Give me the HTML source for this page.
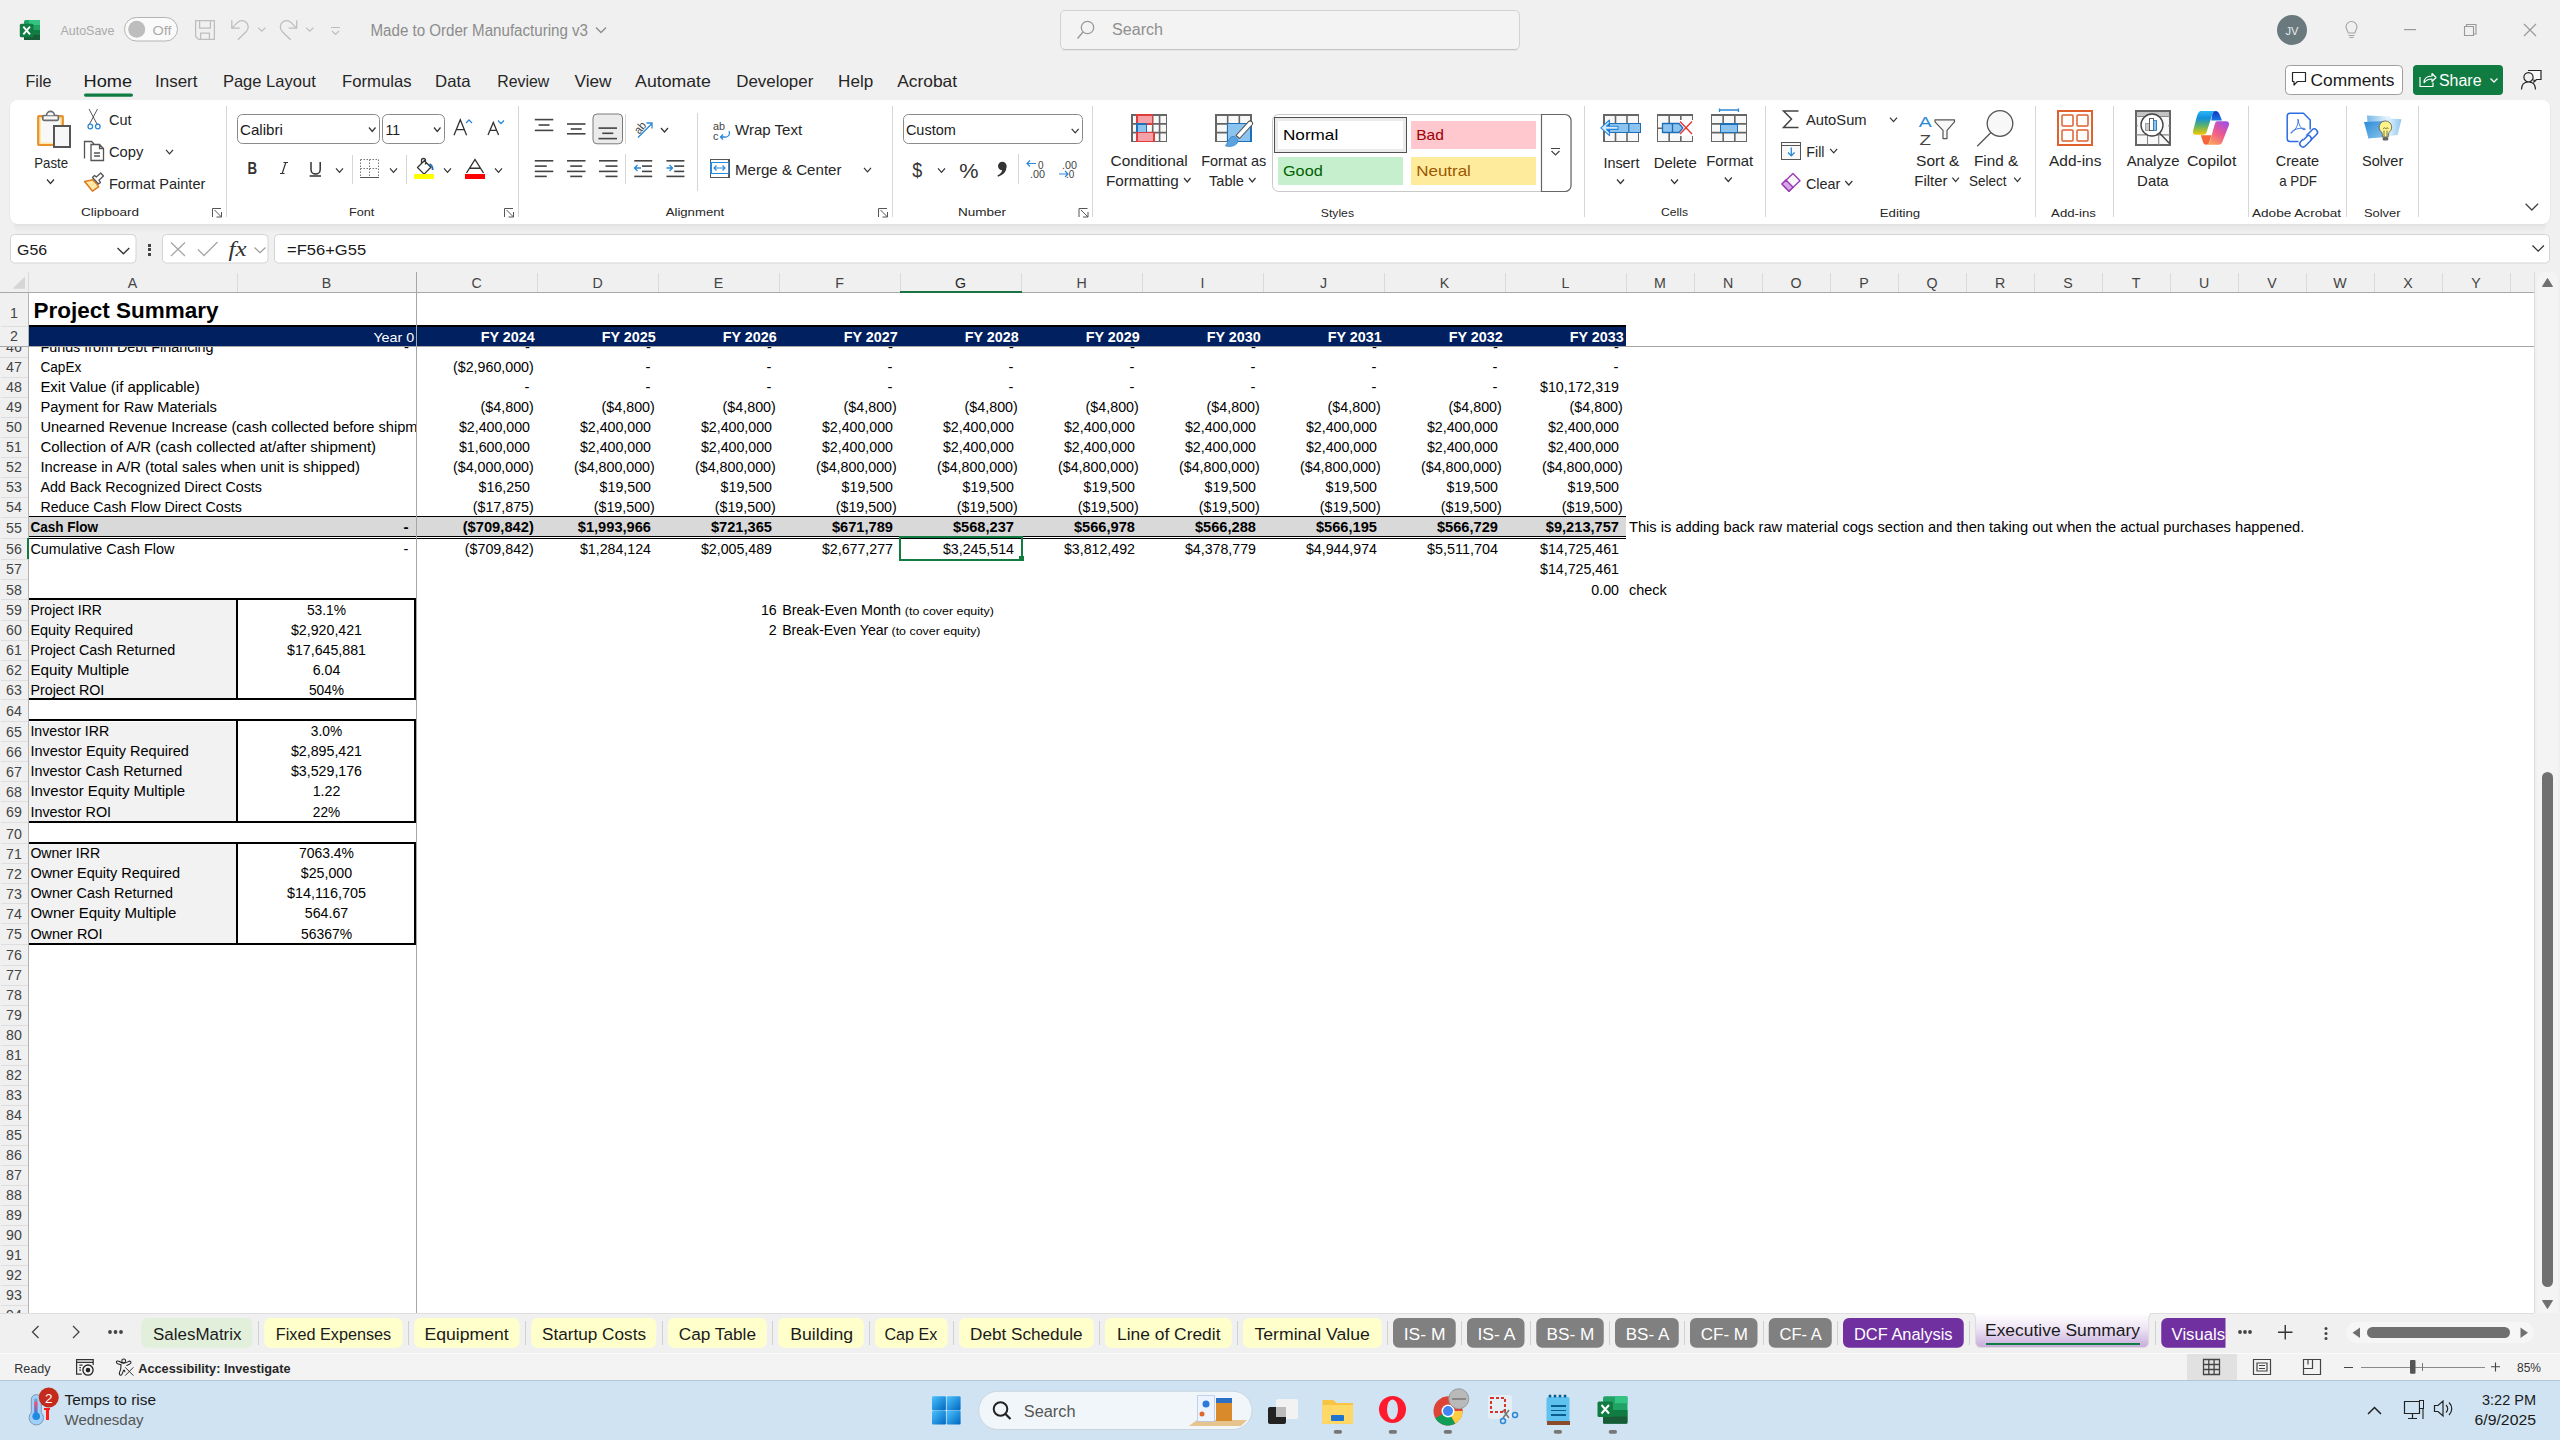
<!DOCTYPE html>
<html><head><meta charset="utf-8"><title>Made to Order Manufacturing v3 - Excel</title>
<style>
html,body{margin:0;padding:0;width:2560px;height:1440px;overflow:hidden;background:#f0f0f0}
svg{display:block}
text{font-family:"Liberation Sans",sans-serif;white-space:pre}
</style></head><body>
<svg width="2560" height="1440" viewBox="0 0 2560 1440"><rect x="0" y="0" width="2560" height="1440" fill="#f0f0f0" shape-rendering="crispEdges"/><rect x="24" y="20" width="16" height="20" fill="#21a366" rx="1.5"/><rect x="29" y="20" width="11" height="5" fill="#33c481"/><rect x="24" y="30" width="16" height="5" fill="#107c41"/><rect x="24" y="35" width="16" height="5" fill="#185c37"/><rect x="19.8" y="23.7" width="13.7" height="13.6" fill="#107c41" rx="1.5"/><path d="M23.3 26.6 L30 34.4 M30 26.6 L23.3 34.4" fill="none" stroke="#fff" stroke-width="1.9" /><text x="60.5" y="35" font-size="13.5" fill="#aaaaaa" textLength="54" lengthAdjust="spacingAndGlyphs">AutoSave</text><rect x="124.5" y="17.5" width="53" height="23.5" fill="#fafafa" rx="11.75" stroke="#b4b4b4" stroke-width="1"/><circle cx="136.7" cy="29.3" r="8.5" fill="#bdbdbd"/><text x="152.5" y="35" font-size="13.5" fill="#aaaaaa" textLength="19" lengthAdjust="spacingAndGlyphs">Off</text><path d="M195.6 20.6 H214.4 V39.4 H198.6 L195.6 36.4 Z M199.6 20.6 V28 H210.4 V20.6 M200.6 39.4 V33.2 H209.4 V39.4" fill="none" stroke="#bdbdbd" stroke-width="1.25" /><path d="M231.8 20.2 V28.2 H239.8 M232.4 27.6 L237.6 22.4 A6.3 6.3 0 0 1 246.6 31.2 L237.9 39.7" fill="none" stroke="#bdbdbd" stroke-width="1.25" /><path d="M258.2 27.6 l3.6 3.6 l3.6 -3.6" fill="none" stroke="#bdbdbd" stroke-width="1.2" /><path d="M296.7 20.2 V28.2 H288.7 M296.1 27.6 L290.9 22.4 A6.3 6.3 0 0 0 281.9 31.2 L290.6 39.7" fill="none" stroke="#bdbdbd" stroke-width="1.25" /><path d="M306.2 27.6 l3.6 3.6 l3.6 -3.6" fill="none" stroke="#bdbdbd" stroke-width="1.2" /><path d="M331 27.5 h9 M332 31 l3.5 3.5 l3.5 -3.5" fill="none" stroke="#bdbdbd" stroke-width="1.2" /><text x="370.5" y="36" font-size="16" fill="#8c8c8c" textLength="217.5" lengthAdjust="spacingAndGlyphs">Made to Order Manufacturing v3</text><path d="M596 27.5 l5 5 l5 -5" fill="none" stroke="#8c8c8c" stroke-width="1.3" /><rect x="1060.5" y="10.5" width="459" height="39" fill="#f3f3f3" rx="4.5" stroke="#d2d2d2" stroke-width="1"/><rect x="1063" y="49" width="454" height="1.2" fill="#c4c4c4"/><circle cx="1087.5" cy="27.5" r="6.2" fill="none" stroke="#9a9a9a" stroke-width="1.3"/><path d="M1083 32 l-5.5 6.5" fill="none" stroke="#9a9a9a" stroke-width="1.4" /><text x="1112" y="35.3" font-size="16" fill="#8f8f8f" textLength="51" lengthAdjust="spacingAndGlyphs">Search</text><circle cx="2292" cy="30" r="15" fill="#69797e"/><text x="2285.5" y="34.5" font-size="10.5" fill="#e8eef0" textLength="13" lengthAdjust="spacingAndGlyphs">JV</text><path d="M2346 27 a5.5 5.5 0 1 1 11 0 c0 2.5 -2 3.6 -2.2 6 h-6.6 c-0.2 -2.4 -2.2 -3.5 -2.2 -6 z M2348.5 35.5 h6 M2349.5 37.5 h4" fill="none" stroke="#a3a3a3" stroke-width="1.1" /><rect x="2404" y="29" width="12" height="1.2" fill="#9a9a9a"/><path d="M2464.5 26.5 h9 v9 h-9 z M2466.5 26.5 v-2 h9.5 v9.5 h-2.5" fill="none" stroke="#9a9a9a" stroke-width="1.1" /><path d="M2524 24 l12 12 M2536 24 l-12 12" fill="none" stroke="#9a9a9a" stroke-width="1.2" /><text x="25.5" y="87" font-size="16.5" fill="#262626" textLength="26" lengthAdjust="spacingAndGlyphs">File</text><text x="83.5" y="87" font-size="16.5" fill="#1a1a1a" textLength="48.5" lengthAdjust="spacingAndGlyphs">Home</text><text x="155" y="87" font-size="16.5" fill="#262626" textLength="42.5" lengthAdjust="spacingAndGlyphs">Insert</text><text x="222.9" y="87" font-size="16.5" fill="#262626" textLength="92.9" lengthAdjust="spacingAndGlyphs">Page Layout</text><text x="342" y="87" font-size="16.5" fill="#262626" textLength="69.5" lengthAdjust="spacingAndGlyphs">Formulas</text><text x="435.1" y="87" font-size="16.5" fill="#262626" textLength="35.4" lengthAdjust="spacingAndGlyphs">Data</text><text x="497.2" y="87" font-size="16.5" fill="#262626" textLength="52.05" lengthAdjust="spacingAndGlyphs">Review</text><text x="574.5" y="87" font-size="16.5" fill="#262626" textLength="37" lengthAdjust="spacingAndGlyphs">View</text><text x="635.1" y="87" font-size="16.5" fill="#262626" textLength="75.7" lengthAdjust="spacingAndGlyphs">Automate</text><text x="736.2" y="87" font-size="16.5" fill="#262626" textLength="77.1" lengthAdjust="spacingAndGlyphs">Developer</text><text x="838.1" y="87" font-size="16.5" fill="#262626" textLength="35.1" lengthAdjust="spacingAndGlyphs">Help</text><text x="897.2" y="87" font-size="16.5" fill="#262626" textLength="59.9" lengthAdjust="spacingAndGlyphs">Acrobat</text><rect x="84" y="93.5" width="49" height="3.2" fill="#107c41" rx="1.6"/><rect x="2285.5" y="65.5" width="117" height="29" fill="#ffffff" rx="4" stroke="#9e9e9e" stroke-width="1"/><path d="M2292.5 72.5 h13 v9 h-8 l-3.5 3.5 v-3.5 h-1.5 z" fill="none" stroke="#262626" stroke-width="1.2" stroke-linejoin="round" /><text x="2310.5" y="86" font-size="16" fill="#1a1a1a" textLength="84" lengthAdjust="spacingAndGlyphs">Comments</text><rect x="2413" y="65" width="90" height="30" fill="#107c41" rx="4"/><path d="M2420 77 v9.5 h13 v-4 M2424 83 c0-5 3-7 8-7 v-2.5 l4 4 l-4 4 v-2.5 c-3 0 -6 1 -8 4" fill="none" stroke="#fff" stroke-width="1.2" stroke-linejoin="round" /><text x="2439" y="86" font-size="16" fill="#ffffff" textLength="42.5" lengthAdjust="spacingAndGlyphs">Share</text><path d="M2490.5 78.5 l3.5 3.5 l3.5 -3.5" fill="none" stroke="#fff" stroke-width="1.3" /><path d="M2528 70.5 h13 v9 h-4.5 l-2.5 2.5 v-2.5" fill="#fafafa" stroke="#262626" stroke-width="1.2" /><path d="M2521.5 89.5 c0-5 3-7.5 7-7.5 s7 2.5 7 7.5 M2528.5 81.8 a4.6 4.6 0 1 0 0 -9.2 a4.6 4.6 0 1 0 0 9.2" fill="none" stroke="#262626" stroke-width="1.2" /><defs><linearGradient id="rsh" x1="0" y1="0" x2="0" y2="1"><stop offset="0" stop-color="#c9c9c9"/><stop offset=".35" stop-color="#e2e2e2"/><stop offset="1" stop-color="#f0f0f0"/></linearGradient></defs><rect x="14" y="216" width="2532" height="17" fill="url(#rsh)" rx="8"/><rect x="9.5" y="100.5" width="2541" height="124" fill="#dedede" rx="8.5"/><rect x="10" y="100" width="2540" height="124" fill="#ffffff" rx="8"/><rect x="226.1" y="106" width="1" height="111" fill="#d6d6d6" shape-rendering="crispEdges"/><rect x="518.1" y="106" width="1" height="111" fill="#d6d6d6" shape-rendering="crispEdges"/><rect x="892" y="106" width="1" height="111" fill="#d6d6d6" shape-rendering="crispEdges"/><rect x="1092.1" y="106" width="1" height="111" fill="#d6d6d6" shape-rendering="crispEdges"/><rect x="1584" y="106" width="1" height="111" fill="#d6d6d6" shape-rendering="crispEdges"/><rect x="1764.8" y="106" width="1" height="111" fill="#d6d6d6" shape-rendering="crispEdges"/><rect x="2034.9" y="106" width="1" height="111" fill="#d6d6d6" shape-rendering="crispEdges"/><rect x="2113" y="106" width="1" height="111" fill="#d6d6d6" shape-rendering="crispEdges"/><rect x="2248" y="106" width="1" height="111" fill="#d6d6d6" shape-rendering="crispEdges"/><rect x="2346" y="106" width="1" height="111" fill="#d6d6d6" shape-rendering="crispEdges"/><rect x="2418" y="106" width="1" height="111" fill="#d6d6d6" shape-rendering="crispEdges"/><rect x="38.2" y="116.2" width="24.6" height="28.8" fill="#fde9a8" rx="0.5" stroke="#e8912d" stroke-width="2.2"/><rect x="41" y="119" width="19" height="23.5" fill="#f8f8f8"/><rect x="42.8" y="115.5" width="15.6" height="4.8" fill="#f8f8f8" rx="1.2" stroke="#6d6d6d" stroke-width="1.7"/><path d="M46.6 115.3 a3.9 3.9 0 0 1 7.8 0" fill="#f8f8f8" stroke="#6d6d6d" stroke-width="1.7" /><rect x="54" y="126" width="16.2" height="21" fill="#f7f7f7" stroke="#555" stroke-width="1.8" shape-rendering="crispEdges"/><text x="34.3" y="167.7" font-size="14.3" fill="#262626" textLength="33.8" lengthAdjust="spacingAndGlyphs">Paste</text><path d="M47.00 179.50 l3.50 4.00 l3.50 -4.00" fill="none" stroke="#333" stroke-width="1.2" /><path d="M89 109 l8.5 16 M97.5 109 l-8.5 16" fill="none" stroke="#555" stroke-width="1" /><circle cx="90.3" cy="126.5" r="2.3" fill="none" stroke="#2b88d8" stroke-width="1.3"/><circle cx="97.8" cy="126.5" r="2.3" fill="none" stroke="#2b88d8" stroke-width="1.3"/><text x="108.9" y="125.2" font-size="14.3" fill="#262626" textLength="22.6" lengthAdjust="spacingAndGlyphs">Cut</text><path d="M84.5 158.5 v-17 h7 l2.5 2.5" fill="none" stroke="#555" stroke-width="1.3" /><path d="M91 160.5 v-16 h8.5 l4 4 v12 z M99.5 144.5 v4 h4 M94 153 h6 M94 156 h6" fill="none" stroke="#555" stroke-width="1.3" /><text x="108.9" y="156.9" font-size="14.3" fill="#262626" textLength="34.4" lengthAdjust="spacingAndGlyphs">Copy</text><path d="M166.00 149.80 l3.50 4.00 l3.50 -4.00" fill="none" stroke="#333" stroke-width="1.2" /><path d="M84.6 181.5 l7.8 9.6 l6.2 -4.2 l-1.6 -2.6 l-4.2 -4.6 z" fill="#fde9a8" stroke="#e07a1f" stroke-width="1.6" stroke-linejoin="round" /><path d="M92.5 177.5 l6 6.5 l2 -1.6 l-1.6 -2.2 l4.6 -4.2 l-2.8 -3 l-4.4 4 l-1.8 -1.6 z" fill="#fff" stroke="#555" stroke-width="1.3" stroke-linejoin="round" /><text x="108.9" y="189" font-size="14.3" fill="#262626" textLength="96.5" lengthAdjust="spacingAndGlyphs">Format Painter</text><text x="81.1" y="216" font-size="11.6" fill="#262626" textLength="57.9" lengthAdjust="spacingAndGlyphs">Clipboard</text><path d="M212.5 217.0 v-8.5 h8.5" fill="none" stroke="#555" stroke-width="1" /><path d="M214.5 210.0 l7 7 M216.5 217.0 h5 v-5" fill="none" stroke="#555" stroke-width="1" /><rect x="237.5" y="114.5" width="142" height="29" fill="#fff" rx="5" stroke="#8a8a8a" stroke-width="1"/><text x="240" y="135" font-size="14.5" fill="#1a1a1a" textLength="42.9" lengthAdjust="spacingAndGlyphs">Calibri</text><path d="M369.00 127.50 l3.25 4.00 l3.25 -4.00" fill="none" stroke="#333" stroke-width="1.2" /><rect x="382.5" y="114.5" width="62" height="29" fill="#fff" rx="5" stroke="#8a8a8a" stroke-width="1"/><text x="385.5" y="135" font-size="14.5" fill="#1a1a1a" textLength="14.6" lengthAdjust="spacingAndGlyphs">11</text><path d="M434.00 127.50 l3.25 4.00 l3.25 -4.00" fill="none" stroke="#333" stroke-width="1.2" /><path d="M454 135.2 L460.3 119.8 L466.6 135.2 M456.3 129.6 h8" fill="none" stroke="#333" stroke-width="1.3" /><path d="M466 123 l3 -3 l3 3" fill="none" stroke="#2b88d8" stroke-width="1.3" /><path d="M488 135 L493.3 122.5 L498.6 135 M490 130.3 h6.6" fill="none" stroke="#333" stroke-width="1.3" /><path d="M498 120.5 l3 3 l3 -3" fill="none" stroke="#2b88d8" stroke-width="1.3" /><text x="247.5" y="173.8" font-size="16.5" fill="#333" font-weight="bold" textLength="9.6" lengthAdjust="spacingAndGlyphs">B</text><path d="M283.5 162.5 h4.5 M280 173.5 h4.5 M285.8 162.5 l-3.6 11" fill="none" stroke="#333" stroke-width="1.2" /><path d="M311 162 v7.5 a4.6 4.6 0 0 0 9.2 0 v-7.5 M309.6 176 h11.4" fill="none" stroke="#333" stroke-width="1.5" /><path d="M336.00 168.30 l3.50 4.00 l3.50 -4.00" fill="none" stroke="#333" stroke-width="1.2" /><rect x="352" y="154.5" width="1" height="29.5" fill="#d6d6d6" shape-rendering="crispEdges"/><path d="M360.5 159.5 h18 v18 M360.5 159.5 v18 M369.5 159.5 v18 M360.5 168.5 h18" fill="none" stroke="#777" stroke-width="1" stroke-dasharray="1.5 1.5"/><rect x="360" y="176.5" width="19" height="1.8" fill="#555" shape-rendering="crispEdges"/><path d="M390.00 168.30 l3.50 4.00 l3.50 -4.00" fill="none" stroke="#333" stroke-width="1.2" /><rect x="406" y="154.5" width="1" height="29.5" fill="#d6d6d6" shape-rendering="crispEdges"/><path d="M417.5 167.5 l6.8 -6.8 l6.6 6.6 l-6.8 6.8 z M421.5 163.5 v-3 a2 2 0 0 1 4 0 v4" fill="none" stroke="#333" stroke-width="1.3" stroke-linejoin="round" /><path d="M429.5 164 q3.2 1.5 3.2 6" fill="none" stroke="#1d6fb8" stroke-width="1.8" /><rect x="414" y="174" width="20" height="5" fill="#ffff00" shape-rendering="crispEdges"/><path d="M444.00 168.30 l3.50 4.00 l3.50 -4.00" fill="none" stroke="#333" stroke-width="1.2" /><path d="M466.5 173 L475 159.5 L483.5 173 M469.5 168.3 h11" fill="none" stroke="#333" stroke-width="1.4" /><rect x="465" y="174" width="20" height="5" fill="#ff0000" shape-rendering="crispEdges"/><path d="M495.00 168.30 l3.50 4.00 l3.50 -4.00" fill="none" stroke="#333" stroke-width="1.2" /><text x="349" y="216" font-size="11.6" fill="#262626" textLength="25.3" lengthAdjust="spacingAndGlyphs">Font</text><path d="M504.5 217.0 v-8.5 h8.5" fill="none" stroke="#555" stroke-width="1" /><path d="M506.5 210.0 l7 7 M508.5 217.0 h5 v-5" fill="none" stroke="#555" stroke-width="1" /><rect x="534.8" y="118.8" width="18.5" height="1.6" fill="#444"/><rect x="538.55" y="124.2" width="11" height="1.6" fill="#444"/><rect x="534.8" y="129.6" width="18.5" height="1.6" fill="#444"/><rect x="567" y="123.2" width="18.5" height="1.6" fill="#444"/><rect x="570.75" y="128.2" width="11" height="1.6" fill="#444"/><rect x="567" y="133" width="18.5" height="1.6" fill="#444"/><rect x="593" y="114" width="29.5" height="29.8" fill="#ebebeb" rx="4" stroke="#7a7a7a" stroke-width="1"/><rect x="598.5" y="127.3" width="18.5" height="1.6" fill="#444"/><rect x="602.25" y="132.5" width="11" height="1.6" fill="#444"/><rect x="598.5" y="137.8" width="18.5" height="1.6" fill="#444"/><rect x="625.3" y="114" width="1" height="30" fill="#d6d6d6" shape-rendering="crispEdges"/><g transform="rotate(-50 640 127)"><text x="633.5" y="131.5" font-size="11.5" fill="#444" textLength="12" lengthAdjust="spacingAndGlyphs">ab</text></g><path d="M638 137.5 l14 -14 M646.5 123 h5.5 v5.5" fill="none" stroke="#2b88d8" stroke-width="1.3" /><path d="M661.00 128.00 l3.50 4.00 l3.50 -4.00" fill="none" stroke="#333" stroke-width="1.2" /><rect x="534.8" y="160" width="18.5" height="1.6" fill="#444"/><rect x="534.8" y="165.3" width="12" height="1.6" fill="#444"/><rect x="534.8" y="170.6" width="18.5" height="1.6" fill="#444"/><rect x="534.8" y="175.6" width="12" height="1.6" fill="#444"/><rect x="567" y="160" width="18.5" height="1.6" fill="#444"/><rect x="570.25" y="165.3" width="12" height="1.6" fill="#444"/><rect x="567" y="170.6" width="18.5" height="1.6" fill="#444"/><rect x="570.25" y="175.6" width="12" height="1.6" fill="#444"/><rect x="599" y="160" width="18.5" height="1.6" fill="#444"/><rect x="605.5" y="165.3" width="12" height="1.6" fill="#444"/><rect x="599" y="170.6" width="18.5" height="1.6" fill="#444"/><rect x="605.5" y="175.6" width="12" height="1.6" fill="#444"/><rect x="625.3" y="154" width="1" height="30" fill="#d6d6d6" shape-rendering="crispEdges"/><rect x="634.25" y="160" width="18" height="1.6" fill="#444"/><rect x="634.25" y="175.6" width="18" height="1.6" fill="#444"/><rect x="642" y="165.3" width="10" height="1.6" fill="#444"/><rect x="642" y="170.6" width="10" height="1.6" fill="#444"/><path d="M641 168 h-6 M637.5 165 l-3 3 l3 3" fill="none" stroke="#2b88d8" stroke-width="1.3" /><rect x="666.45" y="160" width="18" height="1.6" fill="#444"/><rect x="666.45" y="175.6" width="18" height="1.6" fill="#444"/><rect x="674.2" y="165.3" width="10" height="1.6" fill="#444"/><rect x="674.2" y="170.6" width="10" height="1.6" fill="#444"/><path d="M666.5 168 h6 M669.5 165 l3 3 l-3 3" fill="none" stroke="#2b88d8" stroke-width="1.3" /><rect x="697" y="113" width="1" height="77.5" fill="#d6d6d6" shape-rendering="crispEdges"/><text x="713" y="130" font-size="11" fill="#444" textLength="12" lengthAdjust="spacingAndGlyphs">ab</text><text x="713" y="139.5" font-size="11" fill="#444">c</text><path d="M729 131 a4 4 0 0 1 -4 6 h-4 M723 134.5 l-2.5 2.5 l2.5 2.5" fill="none" stroke="#2b88d8" stroke-width="1.3" /><text x="735" y="135.2" font-size="14.3" fill="#262626" textLength="67.2" lengthAdjust="spacingAndGlyphs">Wrap Text</text><rect x="710.5" y="159.5" width="18.5" height="18" fill="#fff" stroke="#555" stroke-width="1.3" shape-rendering="crispEdges"/><rect x="711" y="162.5" width="17.5" height="11" fill="#fff" stroke="#2b88d8" stroke-width="1.3" shape-rendering="crispEdges"/><path d="M714 168 h11 M716.5 165.5 l-2.5 2.5 l2.5 2.5 M722.5 165.5 l2.5 2.5 l-2.5 2.5" fill="none" stroke="#2b88d8" stroke-width="1.1" /><text x="735" y="175" font-size="14.3" fill="#262626" textLength="106.5" lengthAdjust="spacingAndGlyphs">Merge &amp; Center</text><path d="M864.00 167.80 l3.50 4.00 l3.50 -4.00" fill="none" stroke="#333" stroke-width="1.2" /><text x="665.7" y="216" font-size="11.6" fill="#262626" textLength="58.5" lengthAdjust="spacingAndGlyphs">Alignment</text><path d="M878.5 217.0 v-8.5 h8.5" fill="none" stroke="#555" stroke-width="1" /><path d="M880.5 210.0 l7 7 M882.5 217.0 h5 v-5" fill="none" stroke="#555" stroke-width="1" /><rect x="903.5" y="114.5" width="179" height="29" fill="#fff" rx="5" stroke="#8a8a8a" stroke-width="1"/><text x="905.9" y="134.8" font-size="14.5" fill="#1a1a1a" textLength="49.9" lengthAdjust="spacingAndGlyphs">Custom</text><path d="M1071.70 128.80 l3.50 4.00 l3.50 -4.00" fill="none" stroke="#333" stroke-width="1.2" /><text x="912.2" y="177.2" font-size="19.5" fill="#333" textLength="10" lengthAdjust="spacingAndGlyphs">$</text><path d="M938.00 168.30 l3.50 4.00 l3.50 -4.00" fill="none" stroke="#333" stroke-width="1.2" /><text x="959.2" y="177.8" font-size="19.5" fill="#333" textLength="19.3" lengthAdjust="spacingAndGlyphs">%</text><circle cx="1002.3" cy="166" r="4.3" fill="#333"/><path d="M1006.4 166.5 q0.5 7 -8.4 10.2 l-0.6 -1.3 q4.8 -2.5 5 -6.5 z" fill="#333" /><rect x="1018" y="154" width="1" height="30" fill="#d6d6d6" shape-rendering="crispEdges"/><text x="1038" y="169" font-size="10" fill="#444">0</text><text x="1030" y="178" font-size="10" fill="#444" textLength="15" lengthAdjust="spacingAndGlyphs">.00</text><path d="M1036 163.5 h-9 M1030 160.5 l-3 3 l3 3" fill="none" stroke="#2b88d8" stroke-width="1.2" /><text x="1062" y="169" font-size="10" fill="#444" textLength="15" lengthAdjust="spacingAndGlyphs">.00</text><text x="1066" y="178" font-size="10" fill="#444">.0</text><path d="M1059 174 h9 M1065 171 l3 3 l-3 3" fill="none" stroke="#2b88d8" stroke-width="1.2" /><text x="957.9" y="216" font-size="11.6" fill="#262626" textLength="48.2" lengthAdjust="spacingAndGlyphs">Number</text><path d="M1079.0 217.0 v-8.5 h8.5" fill="none" stroke="#555" stroke-width="1" /><path d="M1081.0 210.0 l7 7 M1083.0 217.0 h5 v-5" fill="none" stroke="#555" stroke-width="1" /><rect x="1132" y="115" width="34.5" height="26.5" fill="#f8f8f8" stroke="#666" stroke-width="1.6" shape-rendering="crispEdges"/><path d="M1138.90 115.00 v26.50" fill="none" stroke="#666" stroke-width="1.6" /><path d="M1145.80 115.00 v26.50" fill="none" stroke="#666" stroke-width="1.6" /><path d="M1152.70 115.00 v26.50" fill="none" stroke="#666" stroke-width="1.6" /><path d="M1159.60 115.00 v26.50" fill="none" stroke="#666" stroke-width="1.6" /><path d="M1132.00 123.83 h34.50" fill="none" stroke="#666" stroke-width="1.6" /><path d="M1132.00 132.67 h34.50" fill="none" stroke="#666" stroke-width="1.6" /><rect x="1137" y="115" width="15.5" height="8.8" fill="#f6a0a8" stroke="#e03c3c" stroke-width="1.4" shape-rendering="crispEdges"/><rect x="1137" y="123.8" width="9.5" height="8.8" fill="#8cc3ef" stroke="#1d6fb8" stroke-width="1.4" shape-rendering="crispEdges"/><rect x="1137" y="132.6" width="17" height="8.8" fill="#f6a0a8" stroke="#e03c3c" stroke-width="1.4" shape-rendering="crispEdges"/><text x="1110.5" y="166" font-size="14.3" fill="#262626" textLength="77.3" lengthAdjust="spacingAndGlyphs">Conditional</text><text x="1105.9" y="186" font-size="14.3" fill="#262626" textLength="72.9" lengthAdjust="spacingAndGlyphs">Formatting</text><path d="M1184.00 178.00 l3.25 4.00 l3.25 -4.00" fill="none" stroke="#333" stroke-width="1.2" /><rect x="1216" y="115" width="35" height="26.5" fill="#f8f8f8" stroke="#666" stroke-width="1.6" shape-rendering="crispEdges"/><path d="M1227.67 115.00 v26.50" fill="none" stroke="#666" stroke-width="1.6" /><path d="M1239.33 115.00 v26.50" fill="none" stroke="#666" stroke-width="1.6" /><path d="M1216.00 123.83 h35.00" fill="none" stroke="#666" stroke-width="1.6" /><path d="M1216.00 132.67 h35.00" fill="none" stroke="#666" stroke-width="1.6" /><rect x="1227.7" y="123.8" width="23.3" height="17.7" fill="#8cc3ef" stroke="#1d6fb8" stroke-width="1.2" shape-rendering="crispEdges"/><path d="M1251.5 121.5 q2 1.5 0.5 3.5 l-12.5 13.5 l-3.5 -3 l12.5 -13.8 q1.5 -1.5 3 -0.2 z" fill="#fff" stroke="#555" stroke-width="1.1" stroke-linejoin="round" /><path d="M1225.5 146 q7 1.5 11 -2 q2.5 -2.5 0.5 -5.5 l-2.5 -2 q-3 -1 -5 2 q-1.5 3 -4 7.5 z" fill="#5ba3e0" stroke="#3a86c8" stroke-width="0.8" /><text x="1201.2" y="166" font-size="14.3" fill="#262626" textLength="65.1" lengthAdjust="spacingAndGlyphs">Format as</text><text x="1209" y="186" font-size="14.3" fill="#262626" textLength="34.9" lengthAdjust="spacingAndGlyphs">Table</text><path d="M1249.00 178.00 l3.25 4.00 l3.25 -4.00" fill="none" stroke="#333" stroke-width="1.2" /><rect x="1272.5" y="114.5" width="298.5" height="77" fill="#fff" rx="6" stroke="#c8c8c8" stroke-width="1"/><rect x="1274.5" y="117.5" width="132" height="35" fill="#ebebeb" stroke="#505050" stroke-width="1.4" shape-rendering="crispEdges"/><rect x="1278" y="121" width="125" height="28" fill="#ffffff" shape-rendering="crispEdges"/><text x="1283" y="140.2" font-size="14.8" fill="#000000" textLength="55.2" lengthAdjust="spacingAndGlyphs">Normal</text><rect x="1411" y="121" width="125" height="28" fill="#ffc7ce" shape-rendering="crispEdges"/><text x="1416.2" y="140.2" font-size="14.8" fill="#9c0006" textLength="27.7" lengthAdjust="spacingAndGlyphs">Bad</text><rect x="1278" y="157" width="125" height="28" fill="#c6efce" shape-rendering="crispEdges"/><text x="1283" y="175.9" font-size="14.8" fill="#006100" textLength="39.7" lengthAdjust="spacingAndGlyphs">Good</text><rect x="1411" y="157" width="125" height="28" fill="#ffeb9c" shape-rendering="crispEdges"/><text x="1416.2" y="175.9" font-size="14.8" fill="#9c5700" textLength="54.7" lengthAdjust="spacingAndGlyphs">Neutral</text><path d="M1541.5 114.5 h23.5 a6 6 0 0 1 6 6 v65 a6 6 0 0 1 -6 6 h-23.5 z" fill="#fff" stroke="#666" stroke-width="1.2" /><rect x="1551" y="148" width="9" height="1.2" fill="#444" shape-rendering="crispEdges"/><path d="M1551.50 151.00 l4.00 4.00 l4.00 -4.00" fill="none" stroke="#444" stroke-width="1.2" /><text x="1320.8" y="216.7" font-size="11.6" fill="#262626" textLength="33.2" lengthAdjust="spacingAndGlyphs">Styles</text><rect x="1604" y="115" width="34.5" height="26.5" fill="#f8f8f8" stroke="#666" stroke-width="1.6" shape-rendering="crispEdges"/><path d="M1615.50 115.00 v26.50" fill="none" stroke="#666" stroke-width="1.6" /><path d="M1627.00 115.00 v26.50" fill="none" stroke="#666" stroke-width="1.6" /><path d="M1604.00 128.25 h34.50" fill="none" stroke="#666" stroke-width="1.6" /><rect x="1609" y="123.5" width="31.5" height="9" fill="#8cc3ef" stroke="#1d6fb8" stroke-width="1.3" shape-rendering="crispEdges"/><path d="M1628.8 123.5 v9" fill="none" stroke="#1d6fb8" stroke-width="1.2" /><path d="M1618 126.2 h-11.5 l3 -3 v-3.2 l-8.7 7.8 l8.7 7.8 v-3.2 l-3 -3 h11.5 z" fill="#d6eaf9" stroke="#2b88d8" stroke-width="1.1" stroke-linejoin="round" /><text x="1603.4" y="167.7" font-size="14.3" fill="#262626" textLength="36" lengthAdjust="spacingAndGlyphs">Insert</text><path d="M1617.00 179.50 l3.50 4.00 l3.50 -4.00" fill="none" stroke="#333" stroke-width="1.2" /><rect x="1657.5" y="115" width="35" height="26.5" fill="#f8f8f8" stroke="#666" stroke-width="1.6" shape-rendering="crispEdges"/><path d="M1669.17 115.00 v26.50" fill="none" stroke="#666" stroke-width="1.6" /><path d="M1680.83 115.00 v26.50" fill="none" stroke="#666" stroke-width="1.6" /><path d="M1657.50 128.25 h35.00" fill="none" stroke="#666" stroke-width="1.6" /><rect x="1679" y="120" width="14" height="16" fill="#fff" shape-rendering="crispEdges"/><path d="M1662.5 123.5 h16.5 l3.8 4.5 l-3.8 4.5 h-16.5 z M1672.5 123.5 v9" fill="#8cc3ef" stroke="#1d6fb8" stroke-width="1.3" stroke-linejoin="round" /><path d="M1680 121.5 l12 12.5 M1692 121.5 l-12 12.5" fill="none" stroke="#e83434" stroke-width="1.4" /><text x="1653.7" y="167.7" font-size="14.3" fill="#262626" textLength="43.1" lengthAdjust="spacingAndGlyphs">Delete</text><path d="M1671.00 179.50 l3.50 4.00 l3.50 -4.00" fill="none" stroke="#333" stroke-width="1.2" /><rect x="1711.5" y="115" width="35" height="26.5" fill="#f8f8f8" stroke="#666" stroke-width="1.6" shape-rendering="crispEdges"/><path d="M1723.17 115.00 v26.50" fill="none" stroke="#666" stroke-width="1.6" /><path d="M1734.83 115.00 v26.50" fill="none" stroke="#666" stroke-width="1.6" /><path d="M1711.50 123.83 h35.00" fill="none" stroke="#666" stroke-width="1.6" /><path d="M1711.50 132.67 h35.00" fill="none" stroke="#666" stroke-width="1.6" /><rect x="1720.5" y="123.8" width="17" height="8.8" fill="#8cc3ef" stroke="#1d6fb8" stroke-width="1.4" shape-rendering="crispEdges"/><path d="M1719.5 108.5 v3.5 M1738.5 108.5 v3.5 M1719.5 110 h19" fill="none" stroke="#2b88d8" stroke-width="1.3" /><text x="1706.2" y="166" font-size="14.3" fill="#262626" textLength="47" lengthAdjust="spacingAndGlyphs">Format</text><path d="M1724.80 177.50 l3.50 4.00 l3.50 -4.00" fill="none" stroke="#333" stroke-width="1.2" /><text x="1661.1" y="216.3" font-size="11.6" fill="#262626" textLength="27" lengthAdjust="spacingAndGlyphs">Cells</text><path d="M1798.5 111 h-15 l8 8 l-8 8.5 h15" fill="none" stroke="#444" stroke-width="1.5" stroke-linejoin="miter" /><text x="1806" y="125" font-size="14.3" fill="#262626" textLength="60.6" lengthAdjust="spacingAndGlyphs">AutoSum</text><path d="M1890.00 117.60 l3.50 4.00 l3.50 -4.00" fill="none" stroke="#333" stroke-width="1.2" /><rect x="1781.8" y="142.5" width="19" height="17" fill="#f8f8f8" stroke="#555" stroke-width="1.3" shape-rendering="crispEdges"/><rect x="1782" y="145" width="18.5" height="1.3" fill="#555" shape-rendering="crispEdges"/><path d="M1791.3 147.5 v8 M1788 152.5 l3.3 3.3 l3.3 -3.3" fill="none" stroke="#2b88d8" stroke-width="1.3" /><text x="1806.3" y="156.7" font-size="14.3" fill="#262626" textLength="18.2" lengthAdjust="spacingAndGlyphs">Fill</text><path d="M1830.20 148.80 l3.50 4.00 l3.50 -4.00" fill="none" stroke="#333" stroke-width="1.2" /><path d="M1782 184 l11 -10.5 l7 7.3 l-11 10.5 z" fill="#f8f8f8" stroke="#9b3bb8" stroke-width="1.4" stroke-linejoin="round" /><path d="M1782 184 l4 -4 l7 7.3 l-4 4 z" fill="#d7a6e6" stroke="#9b3bb8" stroke-width="1.4" stroke-linejoin="round" /><text x="1806" y="188.5" font-size="14.3" fill="#262626" textLength="34.3" lengthAdjust="spacingAndGlyphs">Clear</text><path d="M1845.30 181.00 l3.50 4.00 l3.50 -4.00" fill="none" stroke="#333" stroke-width="1.2" /><text x="1918.8" y="126.8" font-size="15" fill="#2b88d8" textLength="13" lengthAdjust="spacingAndGlyphs">A</text><text x="1919.5" y="144.5" font-size="14" fill="#444" textLength="11.5" lengthAdjust="spacingAndGlyphs">Z</text><path d="M1935 119.8 h19.5 v2 l-7.5 8.5 v8.3 h-4 v-8.3 l-8 -8.5 z" fill="#f8f8f8" stroke="#555" stroke-width="1.2" stroke-linejoin="round" /><text x="1916.1" y="165.6" font-size="14.3" fill="#262626" textLength="43.2" lengthAdjust="spacingAndGlyphs">Sort &amp;</text><text x="1914.3" y="185.5" font-size="14.3" fill="#262626" textLength="33.2" lengthAdjust="spacingAndGlyphs">Filter</text><path d="M1952.40 177.60 l3.25 4.00 l3.25 -4.00" fill="none" stroke="#333" stroke-width="1.2" /><circle cx="2000" cy="123.5" r="12.8" fill="#f8f8f8" stroke="#555" stroke-width="1.3"/><path d="M1991 132.5 l-13.8 13.8" fill="none" stroke="#555" stroke-width="1.3" /><text x="1973.9" y="165.6" font-size="14.3" fill="#262626" textLength="44.2" lengthAdjust="spacingAndGlyphs">Find &amp;</text><text x="1969" y="185.5" font-size="14.3" fill="#262626" textLength="37.5" lengthAdjust="spacingAndGlyphs">Select</text><path d="M2014.20 177.60 l3.25 4.00 l3.25 -4.00" fill="none" stroke="#333" stroke-width="1.2" /><text x="1879.8" y="216.8" font-size="11.6" fill="#262626" textLength="40.4" lengthAdjust="spacingAndGlyphs">Editing</text><rect x="2058" y="111" width="34" height="34" fill="#fff" stroke="#e0602f" stroke-width="1.5" shape-rendering="crispEdges"/><rect x="2062" y="115" width="11" height="11" fill="#fff" rx="1" stroke="#e0602f" stroke-width="1.5"/><rect x="2077" y="115" width="11" height="11" fill="#fff" rx="1" stroke="#e0602f" stroke-width="1.5"/><rect x="2062" y="130" width="11" height="11" fill="#fff" rx="1" stroke="#e0602f" stroke-width="1.5"/><rect x="2077" y="130" width="11" height="11" fill="#fff" rx="1" stroke="#e0602f" stroke-width="1.5"/><text x="2049" y="165.9" font-size="14.3" fill="#262626" textLength="52.4" lengthAdjust="spacingAndGlyphs">Add-ins</text><text x="2051.1" y="216.5" font-size="11.6" fill="#262626" textLength="44.8" lengthAdjust="spacingAndGlyphs">Add-ins</text><rect x="2136" y="111" width="34" height="34" fill="#f8f8f8" stroke="#666" stroke-width="1.6" shape-rendering="crispEdges"/><rect x="2137" y="112" width="32" height="4" fill="#c4c4c4" shape-rendering="crispEdges"/><path d="M2136 116.5 h34 M2136 125.8 h2 M2168 125.8 h2 M2136 134.9 h34 M2147.5 134.9 v10 M2158.7 134.9 v10" fill="none" stroke="#888" stroke-width="1.1" /><circle cx="2152" cy="125" r="11" fill="#fff" stroke="#444" stroke-width="1.4"/><path d="M2159.5 133 l10 10.5" fill="none" stroke="#444" stroke-width="1.4" /><rect x="2145.8" y="123.5" width="3.4" height="6.7" fill="#ccc" stroke="#666" stroke-width="0.6" shape-rendering="crispEdges"/><rect x="2149.4" y="118.5" width="3.6" height="11.7" fill="#fff" stroke="#333" stroke-width="0.8" shape-rendering="crispEdges"/><rect x="2153.2" y="120.5" width="3.6" height="9.7" fill="#8cc3ef" stroke="#1d6fb8" stroke-width="0.8" shape-rendering="crispEdges"/><text x="2126.7" y="165.9" font-size="14.3" fill="#262626" textLength="52.8" lengthAdjust="spacingAndGlyphs">Analyze</text><text x="2137.1" y="186" font-size="14.3" fill="#262626" textLength="31.6" lengthAdjust="spacingAndGlyphs">Data</text><defs><linearGradient id="cpA" x1="0" y1="0" x2="0" y2="1"><stop offset="0" stop-color="#2ab6f6"/><stop offset=".3" stop-color="#138fdc"/><stop offset=".6" stop-color="#55b073"/><stop offset="1" stop-color="#f4c800"/></linearGradient><linearGradient id="cpB" x1=".8" y1="0" x2=".2" y2="1"><stop offset="0" stop-color="#a34ee6"/><stop offset=".5" stop-color="#ef5a8d"/><stop offset="1" stop-color="#faa555"/></linearGradient><linearGradient id="cpC" x1="0" y1="0" x2="0" y2="1"><stop offset="0" stop-color="#0a36c2"/><stop offset="1" stop-color="#1a78e6"/></linearGradient></defs><path d="M2201 111 L2215.5 111 Q2213 112 2212.4 114 L2206.5 132.5 Q2205.8 134.7 2203.5 134.7 L2195.5 134.7 Q2192.5 134.5 2193 131 L2197 116 Q2198.5 111 2201 111 Z" fill="url(#cpA)" /><path d="M2212.4 114 Q2213.5 111 2215.5 111 Q2218.5 111 2219.8 115 L2222 120.5 L2211.2 120.5 Z" fill="url(#cpC)" /><path d="M2217 121.2 L2226 121.2 Q2229.5 121.5 2229 125 L2222.5 141.5 Q2221.5 144.8 2218.5 144.8 L2207 144.8 Q2209 144 2209.5 142.5 L2215 123.5 Q2215.8 121.2 2217 121.2 Z" fill="url(#cpB)" /><path d="M2200.8 135.2 L2211.5 135.2 L2209 143 Q2208.3 144.8 2206 144.8 Q2204 144.8 2203.3 142.8 Z" fill="#f5663a" /><text x="2186.9" y="165.9" font-size="14.3" fill="#262626" textLength="49.5" lengthAdjust="spacingAndGlyphs">Copilot</text><path d="M2298.5 141.6 H2290 Q2287.2 141.6 2287.2 138.8 V116 Q2287.2 113.2 2290 113.2 H2303.5 L2310.2 120 V129.5" fill="none" stroke="#2c6ce0" stroke-width="1.5" stroke-linejoin="round" /><path d="M2298 119 C2298.5 124 2296.5 129 2292 132.5 Q2290 134.2 2291.5 131.8 Q2295.5 127.8 2304.5 128.3 Q2306.5 129.6 2304 129.8 Q2299.5 128.5 2298 119.5" fill="none" stroke="#2c6ce0" stroke-width="0.9" /><rect x="2305" y="131.5" width="13.5" height="6.4" rx="3.2" transform="rotate(-45 2311.75 134.7)" fill="none" stroke="#2c6ce0" stroke-width="1.5"/><rect x="2298.8" y="138" width="13.5" height="6.4" rx="3.2" transform="rotate(-45 2305.55 141.2)" fill="#fff" stroke="#2c6ce0" stroke-width="1.5"/><rect x="2302.5" y="136.5" width="5" height="2.2" transform="rotate(-45 2305 137.6)" fill="#fff"/><path d="M2303.2 140.2 l4.4 -4.4" fill="none" stroke="#2c6ce0" stroke-width="1.5" /><text x="2275.75" y="165.6" font-size="14.3" fill="#262626" textLength="43.25" lengthAdjust="spacingAndGlyphs">Create</text><text x="2279.25" y="185.6" font-size="14.3" fill="#262626" textLength="37.75" lengthAdjust="spacingAndGlyphs">a PDF</text><text x="2252" y="216.9" font-size="11.6" fill="#262626" textLength="89.1" lengthAdjust="spacingAndGlyphs">Adobe Acrobat</text><defs><linearGradient id="svA" x1="0" y1="0" x2="1" y2="0"><stop offset="0" stop-color="#7ab8e8"/><stop offset=".6" stop-color="#e6f3fc"/><stop offset="1" stop-color="#8ec6ee"/></linearGradient><linearGradient id="svB" x1="0" y1="0" x2="1" y2="1"><stop offset="0" stop-color="#2a8ad6"/><stop offset="1" stop-color="#8cc6ee"/></linearGradient></defs><path d="M2367 115.5 L2390 116.5 L2390 118.5 L2401.5 119.3 L2397.6 135 L2368.5 138.5 Z" fill="url(#svA)" /><path d="M2364 122 L2385 121 L2387 137 L2368.4 138.2 Z" fill="url(#svB)" /><path d="M2382 132.5 a6.3 6.3 0 1 1 6.8 0 l-0.6 4.5 h-5.6 z" fill="#fff48a" stroke="#555" stroke-width="0.8" /><path d="M2384 136.5 v-6 M2387 136.5 v-6 M2383.2 129 l1.2 -1.5 l1.4 1.5 l1.4 -1.5 l1.3 1.5" fill="none" stroke="#444" stroke-width="0.7" /><rect x="2382.7" y="137" width="5.5" height="3.5" fill="#666" rx="1.2"/><text x="2362" y="165.6" font-size="14.3" fill="#262626" textLength="41.25" lengthAdjust="spacingAndGlyphs">Solver</text><text x="2363.9" y="216.9" font-size="11.6" fill="#262626" textLength="36.6" lengthAdjust="spacingAndGlyphs">Solver</text><path d="M2525.6 203.8 l6.25 6.2 l6.25 -6.2" fill="none" stroke="#444" stroke-width="1.3" /><rect x="10.5" y="234.5" width="125.5" height="28.5" fill="#ffffff" rx="4" stroke="#d4d4d4" stroke-width="1"/><text x="17" y="254.7" font-size="15" fill="#1a1a1a" textLength="30.1" lengthAdjust="spacingAndGlyphs">G56</text><path d="M117.5 248 l5.9 5.8 l5.9 -5.8" fill="none" stroke="#333" stroke-width="1.3" /><rect x="148" y="243.5" width="3.2" height="3.2" fill="#444" shape-rendering="crispEdges"/><rect x="148" y="248" width="3.2" height="3.2" fill="#444" shape-rendering="crispEdges"/><rect x="148" y="252.5" width="3.2" height="3.2" fill="#444" shape-rendering="crispEdges"/><rect x="162.5" y="234.5" width="105.5" height="28.5" fill="#ffffff" rx="4" stroke="#d4d4d4" stroke-width="1"/><path d="M171 242.5 l14 13.5 M185 242.5 l-14 13.5" fill="none" stroke="#a6a6a6" stroke-width="1.3" /><path d="M198 249.5 l6 6 l13.5 -13.5" fill="none" stroke="#a6a6a6" stroke-width="1.3" /><text x="228.5" y="255.8" font-size="20.5" fill="#333" font-style="italic" style="font-family:&quot;Liberation Serif&quot;" textLength="18" lengthAdjust="spacingAndGlyphs">fx</text><path d="M254.5 247.5 l5.5 5.2 l5.5 -5.2" fill="none" stroke="#999" stroke-width="1.1" /><rect x="274.5" y="234.5" width="2275" height="28.5" fill="#ffffff" rx="4" stroke="#d4d4d4" stroke-width="1"/><text x="287" y="254.7" font-size="15" fill="#1a1a1a" textLength="79.1" lengthAdjust="spacingAndGlyphs">=F56+G55</text><path d="M2532.5 245.5 l5.7 5.7 l5.7 -5.7" fill="none" stroke="#333" stroke-width="1.3" /><rect x="0" y="272" width="2534" height="20" fill="#f0f0f0" shape-rendering="crispEdges"/><rect x="0" y="292" width="2534" height="1021" fill="#ffffff" shape-rendering="crispEdges"/><rect x="0" y="292" width="28" height="1021" fill="#f0f0f0" shape-rendering="crispEdges"/><path d="M25 276.6 V288.8 H12.5 Z" fill="#d6d6d6" /><rect x="237" y="273" width="1" height="19" fill="#dadada" shape-rendering="crispEdges"/><text x="132.5" y="288" font-size="14.2" fill="#444" text-anchor="middle">A</text><rect x="416" y="273" width="1" height="19" fill="#dadada" shape-rendering="crispEdges"/><text x="326.5" y="288" font-size="14.2" fill="#444" text-anchor="middle">B</text><rect x="537" y="273" width="1" height="19" fill="#dadada" shape-rendering="crispEdges"/><text x="476.5" y="288" font-size="14.2" fill="#444" text-anchor="middle">C</text><rect x="658" y="273" width="1" height="19" fill="#dadada" shape-rendering="crispEdges"/><text x="597.5" y="288" font-size="14.2" fill="#444" text-anchor="middle">D</text><rect x="779" y="273" width="1" height="19" fill="#dadada" shape-rendering="crispEdges"/><text x="718.5" y="288" font-size="14.2" fill="#444" text-anchor="middle">E</text><rect x="900" y="273" width="1" height="19" fill="#dadada" shape-rendering="crispEdges"/><text x="839.5" y="288" font-size="14.2" fill="#444" text-anchor="middle">F</text><rect x="1021" y="273" width="1" height="19" fill="#dadada" shape-rendering="crispEdges"/><text x="960.5" y="288" font-size="14.2" fill="#262626" text-anchor="middle">G</text><rect x="1142" y="273" width="1" height="19" fill="#dadada" shape-rendering="crispEdges"/><text x="1081.5" y="288" font-size="14.2" fill="#444" text-anchor="middle">H</text><rect x="1263" y="273" width="1" height="19" fill="#dadada" shape-rendering="crispEdges"/><text x="1202.5" y="288" font-size="14.2" fill="#444" text-anchor="middle">I</text><rect x="1384" y="273" width="1" height="19" fill="#dadada" shape-rendering="crispEdges"/><text x="1323.5" y="288" font-size="14.2" fill="#444" text-anchor="middle">J</text><rect x="1505" y="273" width="1" height="19" fill="#dadada" shape-rendering="crispEdges"/><text x="1444.5" y="288" font-size="14.2" fill="#444" text-anchor="middle">K</text><rect x="1626" y="273" width="1" height="19" fill="#dadada" shape-rendering="crispEdges"/><text x="1565.5" y="288" font-size="14.2" fill="#444" text-anchor="middle">L</text><rect x="1694" y="273" width="1" height="19" fill="#dadada" shape-rendering="crispEdges"/><text x="1660" y="288" font-size="14.2" fill="#444" text-anchor="middle">M</text><rect x="1762" y="273" width="1" height="19" fill="#dadada" shape-rendering="crispEdges"/><text x="1728" y="288" font-size="14.2" fill="#444" text-anchor="middle">N</text><rect x="1830" y="273" width="1" height="19" fill="#dadada" shape-rendering="crispEdges"/><text x="1796" y="288" font-size="14.2" fill="#444" text-anchor="middle">O</text><rect x="1898" y="273" width="1" height="19" fill="#dadada" shape-rendering="crispEdges"/><text x="1864" y="288" font-size="14.2" fill="#444" text-anchor="middle">P</text><rect x="1966" y="273" width="1" height="19" fill="#dadada" shape-rendering="crispEdges"/><text x="1932" y="288" font-size="14.2" fill="#444" text-anchor="middle">Q</text><rect x="2034" y="273" width="1" height="19" fill="#dadada" shape-rendering="crispEdges"/><text x="2000" y="288" font-size="14.2" fill="#444" text-anchor="middle">R</text><rect x="2102" y="273" width="1" height="19" fill="#dadada" shape-rendering="crispEdges"/><text x="2068" y="288" font-size="14.2" fill="#444" text-anchor="middle">S</text><rect x="2170" y="273" width="1" height="19" fill="#dadada" shape-rendering="crispEdges"/><text x="2136" y="288" font-size="14.2" fill="#444" text-anchor="middle">T</text><rect x="2238" y="273" width="1" height="19" fill="#dadada" shape-rendering="crispEdges"/><text x="2204" y="288" font-size="14.2" fill="#444" text-anchor="middle">U</text><rect x="2306" y="273" width="1" height="19" fill="#dadada" shape-rendering="crispEdges"/><text x="2272" y="288" font-size="14.2" fill="#444" text-anchor="middle">V</text><rect x="2374" y="273" width="1" height="19" fill="#dadada" shape-rendering="crispEdges"/><text x="2340" y="288" font-size="14.2" fill="#444" text-anchor="middle">W</text><rect x="2442" y="273" width="1" height="19" fill="#dadada" shape-rendering="crispEdges"/><text x="2408" y="288" font-size="14.2" fill="#444" text-anchor="middle">X</text><rect x="2510" y="273" width="1" height="19" fill="#dadada" shape-rendering="crispEdges"/><text x="2476" y="288" font-size="14.2" fill="#444" text-anchor="middle">Y</text><rect x="28" y="272" width="1" height="20" fill="#dadada" shape-rendering="crispEdges"/><rect x="0" y="292" width="2534" height="1" fill="#a8a8a8" shape-rendering="crispEdges"/><rect x="900" y="291" width="122" height="2" fill="#1a7343" shape-rendering="crispEdges"/><rect x="1" y="326" width="27" height="1" fill="#dedede" shape-rendering="crispEdges"/><text x="14" y="318" font-size="14.2" fill="#444" text-anchor="middle">1</text><rect x="1" y="346" width="27" height="1" fill="#dedede" shape-rendering="crispEdges"/><text x="14" y="341.1" font-size="14.2" fill="#444" text-anchor="middle">2</text><rect x="1" y="376.5" width="27" height="1" fill="#dedede" shape-rendering="crispEdges"/><text x="14" y="372.1" font-size="14.2" fill="#444" text-anchor="middle">47</text><rect x="1" y="396.5" width="27" height="1" fill="#dedede" shape-rendering="crispEdges"/><text x="14" y="392.1" font-size="14.2" fill="#444" text-anchor="middle">48</text><rect x="1" y="416.5" width="27" height="1" fill="#dedede" shape-rendering="crispEdges"/><text x="14" y="412.1" font-size="14.2" fill="#444" text-anchor="middle">49</text><rect x="1" y="436.5" width="27" height="1" fill="#dedede" shape-rendering="crispEdges"/><text x="14" y="432.1" font-size="14.2" fill="#444" text-anchor="middle">50</text><rect x="1" y="456.5" width="27" height="1" fill="#dedede" shape-rendering="crispEdges"/><text x="14" y="452.1" font-size="14.2" fill="#444" text-anchor="middle">51</text><rect x="1" y="476.5" width="27" height="1" fill="#dedede" shape-rendering="crispEdges"/><text x="14" y="472.1" font-size="14.2" fill="#444" text-anchor="middle">52</text><rect x="1" y="496.5" width="27" height="1" fill="#dedede" shape-rendering="crispEdges"/><text x="14" y="492.1" font-size="14.2" fill="#444" text-anchor="middle">53</text><rect x="1" y="516.5" width="27" height="1" fill="#dedede" shape-rendering="crispEdges"/><text x="14" y="512.1" font-size="14.2" fill="#444" text-anchor="middle">54</text><rect x="1" y="537.5" width="27" height="1" fill="#dedede" shape-rendering="crispEdges"/><text x="14" y="533.1" font-size="14.2" fill="#444" text-anchor="middle">55</text><rect x="1" y="558.7" width="27" height="1" fill="#dedede" shape-rendering="crispEdges"/><text x="14" y="554.3" font-size="14.2" fill="#444" text-anchor="middle">56</text><rect x="1" y="578.5" width="27" height="1" fill="#dedede" shape-rendering="crispEdges"/><text x="14" y="574.1" font-size="14.2" fill="#444" text-anchor="middle">57</text><rect x="1" y="599.3" width="27" height="1" fill="#dedede" shape-rendering="crispEdges"/><text x="14" y="594.9" font-size="14.2" fill="#444" text-anchor="middle">58</text><rect x="1" y="619.6" width="27" height="1" fill="#dedede" shape-rendering="crispEdges"/><text x="14" y="615.2" font-size="14.2" fill="#444" text-anchor="middle">59</text><rect x="1" y="639.6" width="27" height="1" fill="#dedede" shape-rendering="crispEdges"/><text x="14" y="635.2" font-size="14.2" fill="#444" text-anchor="middle">60</text><rect x="1" y="659.6" width="27" height="1" fill="#dedede" shape-rendering="crispEdges"/><text x="14" y="655.2" font-size="14.2" fill="#444" text-anchor="middle">61</text><rect x="1" y="679.6" width="27" height="1" fill="#dedede" shape-rendering="crispEdges"/><text x="14" y="675.2" font-size="14.2" fill="#444" text-anchor="middle">62</text><rect x="1" y="699.3" width="27" height="1" fill="#dedede" shape-rendering="crispEdges"/><text x="14" y="694.9" font-size="14.2" fill="#444" text-anchor="middle">63</text><rect x="1" y="720.5" width="27" height="1" fill="#dedede" shape-rendering="crispEdges"/><text x="14" y="716.1" font-size="14.2" fill="#444" text-anchor="middle">64</text><rect x="1" y="741" width="27" height="1" fill="#dedede" shape-rendering="crispEdges"/><text x="14" y="736.6" font-size="14.2" fill="#444" text-anchor="middle">65</text><rect x="1" y="761" width="27" height="1" fill="#dedede" shape-rendering="crispEdges"/><text x="14" y="756.6" font-size="14.2" fill="#444" text-anchor="middle">66</text><rect x="1" y="781" width="27" height="1" fill="#dedede" shape-rendering="crispEdges"/><text x="14" y="776.6" font-size="14.2" fill="#444" text-anchor="middle">67</text><rect x="1" y="801" width="27" height="1" fill="#dedede" shape-rendering="crispEdges"/><text x="14" y="796.6" font-size="14.2" fill="#444" text-anchor="middle">68</text><rect x="1" y="821.75" width="27" height="1" fill="#dedede" shape-rendering="crispEdges"/><text x="14" y="817.35" font-size="14.2" fill="#444" text-anchor="middle">69</text><rect x="1" y="843" width="27" height="1" fill="#dedede" shape-rendering="crispEdges"/><text x="14" y="838.6" font-size="14.2" fill="#444" text-anchor="middle">70</text><rect x="1" y="863" width="27" height="1" fill="#dedede" shape-rendering="crispEdges"/><text x="14" y="858.6" font-size="14.2" fill="#444" text-anchor="middle">71</text><rect x="1" y="883" width="27" height="1" fill="#dedede" shape-rendering="crispEdges"/><text x="14" y="878.6" font-size="14.2" fill="#444" text-anchor="middle">72</text><rect x="1" y="903" width="27" height="1" fill="#dedede" shape-rendering="crispEdges"/><text x="14" y="898.6" font-size="14.2" fill="#444" text-anchor="middle">73</text><rect x="1" y="923" width="27" height="1" fill="#dedede" shape-rendering="crispEdges"/><text x="14" y="918.6" font-size="14.2" fill="#444" text-anchor="middle">74</text><rect x="1" y="943.75" width="27" height="1" fill="#dedede" shape-rendering="crispEdges"/><text x="14" y="939.35" font-size="14.2" fill="#444" text-anchor="middle">75</text><rect x="1" y="964.6" width="27" height="1" fill="#dedede" shape-rendering="crispEdges"/><text x="14" y="960.2" font-size="14.2" fill="#444" text-anchor="middle">76</text><rect x="1" y="984.6" width="27" height="1" fill="#dedede" shape-rendering="crispEdges"/><text x="14" y="980.2" font-size="14.2" fill="#444" text-anchor="middle">77</text><rect x="1" y="1004.6" width="27" height="1" fill="#dedede" shape-rendering="crispEdges"/><text x="14" y="1000.2" font-size="14.2" fill="#444" text-anchor="middle">78</text><rect x="1" y="1024.6" width="27" height="1" fill="#dedede" shape-rendering="crispEdges"/><text x="14" y="1020.2" font-size="14.2" fill="#444" text-anchor="middle">79</text><rect x="1" y="1044.6" width="27" height="1" fill="#dedede" shape-rendering="crispEdges"/><text x="14" y="1040.2" font-size="14.2" fill="#444" text-anchor="middle">80</text><rect x="1" y="1064.6" width="27" height="1" fill="#dedede" shape-rendering="crispEdges"/><text x="14" y="1060.2" font-size="14.2" fill="#444" text-anchor="middle">81</text><rect x="1" y="1084.6" width="27" height="1" fill="#dedede" shape-rendering="crispEdges"/><text x="14" y="1080.2" font-size="14.2" fill="#444" text-anchor="middle">82</text><rect x="1" y="1104.6" width="27" height="1" fill="#dedede" shape-rendering="crispEdges"/><text x="14" y="1100.2" font-size="14.2" fill="#444" text-anchor="middle">83</text><rect x="1" y="1124.6" width="27" height="1" fill="#dedede" shape-rendering="crispEdges"/><text x="14" y="1120.2" font-size="14.2" fill="#444" text-anchor="middle">84</text><rect x="1" y="1144.6" width="27" height="1" fill="#dedede" shape-rendering="crispEdges"/><text x="14" y="1140.2" font-size="14.2" fill="#444" text-anchor="middle">85</text><rect x="1" y="1164.6" width="27" height="1" fill="#dedede" shape-rendering="crispEdges"/><text x="14" y="1160.2" font-size="14.2" fill="#444" text-anchor="middle">86</text><rect x="1" y="1184.6" width="27" height="1" fill="#dedede" shape-rendering="crispEdges"/><text x="14" y="1180.2" font-size="14.2" fill="#444" text-anchor="middle">87</text><rect x="1" y="1204.6" width="27" height="1" fill="#dedede" shape-rendering="crispEdges"/><text x="14" y="1200.2" font-size="14.2" fill="#444" text-anchor="middle">88</text><rect x="1" y="1224.6" width="27" height="1" fill="#dedede" shape-rendering="crispEdges"/><text x="14" y="1220.2" font-size="14.2" fill="#444" text-anchor="middle">89</text><rect x="1" y="1244.6" width="27" height="1" fill="#dedede" shape-rendering="crispEdges"/><text x="14" y="1240.2" font-size="14.2" fill="#444" text-anchor="middle">90</text><rect x="1" y="1264.6" width="27" height="1" fill="#dedede" shape-rendering="crispEdges"/><text x="14" y="1260.2" font-size="14.2" fill="#444" text-anchor="middle">91</text><rect x="1" y="1284.6" width="27" height="1" fill="#dedede" shape-rendering="crispEdges"/><text x="14" y="1280.2" font-size="14.2" fill="#444" text-anchor="middle">92</text><rect x="1" y="1304.6" width="27" height="1" fill="#dedede" shape-rendering="crispEdges"/><text x="14" y="1300.2" font-size="14.2" fill="#444" text-anchor="middle">93</text><rect x="1" y="1324.6" width="27" height="1" fill="#dedede" shape-rendering="crispEdges"/><text x="14" y="1320.2" font-size="14.2" fill="#444" text-anchor="middle">94</text><defs><clipPath id="clip46"><rect x="0" y="346.5" width="2534" height="12"/></clipPath><clipPath id="clipA"><rect x="28" y="410" width="388" height="30"/></clipPath><clipPath id="sheetclip"><rect x="0" y="293" width="2534" height="1020"/></clipPath></defs><g clip-path="url(#clip46)"><text x="14" y="352.1" font-size="14.2" fill="#444" text-anchor="middle">46</text><rect x="0" y="356.5" width="28" height="1" fill="#dcdcdc" shape-rendering="crispEdges"/></g><text x="33.5" y="317.6" font-size="21.5" fill="#000" font-weight="bold" textLength="185" lengthAdjust="spacingAndGlyphs">Project Summary</text><rect x="28" y="325" width="1598" height="2" fill="#000" shape-rendering="crispEdges"/><rect x="28" y="327" width="1598" height="19" fill="#002060" shape-rendering="crispEdges"/><text x="414.2" y="341.9" font-size="13.4" fill="#fff" text-anchor="end" textLength="40.8" lengthAdjust="spacingAndGlyphs">Year 0</text><text x="534.8" y="341.9" font-size="13.8" fill="#fff" text-anchor="end" font-weight="bold" textLength="54" lengthAdjust="spacingAndGlyphs">FY 2024</text><text x="655.8" y="341.9" font-size="13.8" fill="#fff" text-anchor="end" font-weight="bold" textLength="54" lengthAdjust="spacingAndGlyphs">FY 2025</text><text x="776.8" y="341.9" font-size="13.8" fill="#fff" text-anchor="end" font-weight="bold" textLength="54" lengthAdjust="spacingAndGlyphs">FY 2026</text><text x="897.8" y="341.9" font-size="13.8" fill="#fff" text-anchor="end" font-weight="bold" textLength="54" lengthAdjust="spacingAndGlyphs">FY 2027</text><text x="1018.8" y="341.9" font-size="13.8" fill="#fff" text-anchor="end" font-weight="bold" textLength="54" lengthAdjust="spacingAndGlyphs">FY 2028</text><text x="1139.8" y="341.9" font-size="13.8" fill="#fff" text-anchor="end" font-weight="bold" textLength="54" lengthAdjust="spacingAndGlyphs">FY 2029</text><text x="1260.8" y="341.9" font-size="13.8" fill="#fff" text-anchor="end" font-weight="bold" textLength="54" lengthAdjust="spacingAndGlyphs">FY 2030</text><text x="1381.8" y="341.9" font-size="13.8" fill="#fff" text-anchor="end" font-weight="bold" textLength="54" lengthAdjust="spacingAndGlyphs">FY 2031</text><text x="1502.8" y="341.9" font-size="13.8" fill="#fff" text-anchor="end" font-weight="bold" textLength="54" lengthAdjust="spacingAndGlyphs">FY 2032</text><text x="1623.8" y="341.9" font-size="13.8" fill="#fff" text-anchor="end" font-weight="bold" textLength="54" lengthAdjust="spacingAndGlyphs">FY 2033</text><g clip-path="url(#clip46)"><text x="40.4" y="351.8" font-size="13.8" fill="#000" textLength="173.2" lengthAdjust="spacingAndGlyphs">Funds from Debt Financing</text><text x="409" y="351.8" font-size="13.8" fill="#000" text-anchor="end" textLength="4.93" lengthAdjust="spacingAndGlyphs">-</text><text x="530" y="351.8" font-size="13.8" fill="#000" text-anchor="end" textLength="4.93" lengthAdjust="spacingAndGlyphs">-</text><text x="651" y="351.8" font-size="13.8" fill="#000" text-anchor="end" textLength="4.93" lengthAdjust="spacingAndGlyphs">-</text><text x="772" y="351.8" font-size="13.8" fill="#000" text-anchor="end" textLength="4.93" lengthAdjust="spacingAndGlyphs">-</text><text x="893" y="351.8" font-size="13.8" fill="#000" text-anchor="end" textLength="4.93" lengthAdjust="spacingAndGlyphs">-</text><text x="1014" y="351.8" font-size="13.8" fill="#000" text-anchor="end" textLength="4.93" lengthAdjust="spacingAndGlyphs">-</text><text x="1135" y="351.8" font-size="13.8" fill="#000" text-anchor="end" textLength="4.93" lengthAdjust="spacingAndGlyphs">-</text><text x="1256" y="351.8" font-size="13.8" fill="#000" text-anchor="end" textLength="4.93" lengthAdjust="spacingAndGlyphs">-</text><text x="1377" y="351.8" font-size="13.8" fill="#000" text-anchor="end" textLength="4.93" lengthAdjust="spacingAndGlyphs">-</text><text x="1498" y="351.8" font-size="13.8" fill="#000" text-anchor="end" textLength="4.93" lengthAdjust="spacingAndGlyphs">-</text><text x="1619" y="351.8" font-size="13.8" fill="#000" text-anchor="end" textLength="4.93" lengthAdjust="spacingAndGlyphs">-</text></g><text x="40.4" y="371.8" font-size="13.8" fill="#000" textLength="40.95" lengthAdjust="spacingAndGlyphs">CapEx</text><text x="40.4" y="391.8" font-size="13.8" fill="#000" textLength="159.45" lengthAdjust="spacingAndGlyphs">Exit Value (if applicable)</text><text x="40.4" y="411.8" font-size="13.8" fill="#000" textLength="176.45" lengthAdjust="spacingAndGlyphs">Payment for Raw Materials</text><g clip-path="url(#clipA)"><text x="40.4" y="431.8" font-size="13.8" fill="#000" textLength="402.34" lengthAdjust="spacingAndGlyphs">Unearned Revenue Increase (cash collected before shipment)</text></g><text x="40.4" y="451.8" font-size="13.8" fill="#000" textLength="335.7" lengthAdjust="spacingAndGlyphs">Collection of A/R (cash collected at/after shipment)</text><text x="40.4" y="471.8" font-size="13.8" fill="#000" textLength="319.45" lengthAdjust="spacingAndGlyphs">Increase in A/R (total sales when unit is shipped)</text><text x="40.4" y="491.8" font-size="13.8" fill="#000" textLength="221.45" lengthAdjust="spacingAndGlyphs">Add Back Recognized Direct Costs</text><text x="40.4" y="511.8" font-size="13.8" fill="#000" textLength="201.45" lengthAdjust="spacingAndGlyphs">Reduce Cash Flow Direct Costs</text><rect x="28" y="516" width="1598" height="1" fill="#000" shape-rendering="crispEdges"/><rect x="28" y="517" width="1598" height="19" fill="#d9d9d9" shape-rendering="crispEdges"/><rect x="28" y="536" width="1598" height="1" fill="#000" shape-rendering="crispEdges"/><rect x="28" y="538" width="1598" height="1" fill="#000" shape-rendering="crispEdges"/><text x="533.8" y="371.8" font-size="13.8" fill="#000" text-anchor="end" textLength="80.83" lengthAdjust="spacingAndGlyphs">($2,960,000)</text><text x="650.5" y="371.8" font-size="13.8" fill="#000" text-anchor="end" textLength="4.93" lengthAdjust="spacingAndGlyphs">-</text><text x="771.5" y="371.8" font-size="13.8" fill="#000" text-anchor="end" textLength="4.93" lengthAdjust="spacingAndGlyphs">-</text><text x="892.5" y="371.8" font-size="13.8" fill="#000" text-anchor="end" textLength="4.93" lengthAdjust="spacingAndGlyphs">-</text><text x="1013.5" y="371.8" font-size="13.8" fill="#000" text-anchor="end" textLength="4.93" lengthAdjust="spacingAndGlyphs">-</text><text x="1134.5" y="371.8" font-size="13.8" fill="#000" text-anchor="end" textLength="4.93" lengthAdjust="spacingAndGlyphs">-</text><text x="1255.5" y="371.8" font-size="13.8" fill="#000" text-anchor="end" textLength="4.93" lengthAdjust="spacingAndGlyphs">-</text><text x="1376.5" y="371.8" font-size="13.8" fill="#000" text-anchor="end" textLength="4.93" lengthAdjust="spacingAndGlyphs">-</text><text x="1497.5" y="371.8" font-size="13.8" fill="#000" text-anchor="end" textLength="4.93" lengthAdjust="spacingAndGlyphs">-</text><text x="1618.5" y="371.8" font-size="13.8" fill="#000" text-anchor="end" textLength="4.93" lengthAdjust="spacingAndGlyphs">-</text><text x="529.5" y="391.8" font-size="13.8" fill="#000" text-anchor="end" textLength="4.93" lengthAdjust="spacingAndGlyphs">-</text><text x="650.5" y="391.8" font-size="13.8" fill="#000" text-anchor="end" textLength="4.93" lengthAdjust="spacingAndGlyphs">-</text><text x="771.5" y="391.8" font-size="13.8" fill="#000" text-anchor="end" textLength="4.93" lengthAdjust="spacingAndGlyphs">-</text><text x="892.5" y="391.8" font-size="13.8" fill="#000" text-anchor="end" textLength="4.93" lengthAdjust="spacingAndGlyphs">-</text><text x="1013.5" y="391.8" font-size="13.8" fill="#000" text-anchor="end" textLength="4.93" lengthAdjust="spacingAndGlyphs">-</text><text x="1134.5" y="391.8" font-size="13.8" fill="#000" text-anchor="end" textLength="4.93" lengthAdjust="spacingAndGlyphs">-</text><text x="1255.5" y="391.8" font-size="13.8" fill="#000" text-anchor="end" textLength="4.93" lengthAdjust="spacingAndGlyphs">-</text><text x="1376.5" y="391.8" font-size="13.8" fill="#000" text-anchor="end" textLength="4.93" lengthAdjust="spacingAndGlyphs">-</text><text x="1497.5" y="391.8" font-size="13.8" fill="#000" text-anchor="end" textLength="4.93" lengthAdjust="spacingAndGlyphs">-</text><text x="1619" y="391.8" font-size="13.8" fill="#000" text-anchor="end" textLength="78.98" lengthAdjust="spacingAndGlyphs">$10,172,319</text><text x="533.8" y="411.8" font-size="13.8" fill="#000" text-anchor="end" textLength="53.2" lengthAdjust="spacingAndGlyphs">($4,800)</text><text x="654.8" y="411.8" font-size="13.8" fill="#000" text-anchor="end" textLength="53.2" lengthAdjust="spacingAndGlyphs">($4,800)</text><text x="775.8" y="411.8" font-size="13.8" fill="#000" text-anchor="end" textLength="53.2" lengthAdjust="spacingAndGlyphs">($4,800)</text><text x="896.8" y="411.8" font-size="13.8" fill="#000" text-anchor="end" textLength="53.2" lengthAdjust="spacingAndGlyphs">($4,800)</text><text x="1017.8" y="411.8" font-size="13.8" fill="#000" text-anchor="end" textLength="53.2" lengthAdjust="spacingAndGlyphs">($4,800)</text><text x="1138.8" y="411.8" font-size="13.8" fill="#000" text-anchor="end" textLength="53.2" lengthAdjust="spacingAndGlyphs">($4,800)</text><text x="1259.8" y="411.8" font-size="13.8" fill="#000" text-anchor="end" textLength="53.2" lengthAdjust="spacingAndGlyphs">($4,800)</text><text x="1380.8" y="411.8" font-size="13.8" fill="#000" text-anchor="end" textLength="53.2" lengthAdjust="spacingAndGlyphs">($4,800)</text><text x="1501.8" y="411.8" font-size="13.8" fill="#000" text-anchor="end" textLength="53.2" lengthAdjust="spacingAndGlyphs">($4,800)</text><text x="1622.8" y="411.8" font-size="13.8" fill="#000" text-anchor="end" textLength="53.2" lengthAdjust="spacingAndGlyphs">($4,800)</text><text x="530" y="431.8" font-size="13.8" fill="#000" text-anchor="end" textLength="71.07" lengthAdjust="spacingAndGlyphs">$2,400,000</text><text x="651" y="431.8" font-size="13.8" fill="#000" text-anchor="end" textLength="71.07" lengthAdjust="spacingAndGlyphs">$2,400,000</text><text x="772" y="431.8" font-size="13.8" fill="#000" text-anchor="end" textLength="71.07" lengthAdjust="spacingAndGlyphs">$2,400,000</text><text x="893" y="431.8" font-size="13.8" fill="#000" text-anchor="end" textLength="71.07" lengthAdjust="spacingAndGlyphs">$2,400,000</text><text x="1014" y="431.8" font-size="13.8" fill="#000" text-anchor="end" textLength="71.07" lengthAdjust="spacingAndGlyphs">$2,400,000</text><text x="1135" y="431.8" font-size="13.8" fill="#000" text-anchor="end" textLength="71.07" lengthAdjust="spacingAndGlyphs">$2,400,000</text><text x="1256" y="431.8" font-size="13.8" fill="#000" text-anchor="end" textLength="71.07" lengthAdjust="spacingAndGlyphs">$2,400,000</text><text x="1377" y="431.8" font-size="13.8" fill="#000" text-anchor="end" textLength="71.07" lengthAdjust="spacingAndGlyphs">$2,400,000</text><text x="1498" y="431.8" font-size="13.8" fill="#000" text-anchor="end" textLength="71.07" lengthAdjust="spacingAndGlyphs">$2,400,000</text><text x="1619" y="431.8" font-size="13.8" fill="#000" text-anchor="end" textLength="71.07" lengthAdjust="spacingAndGlyphs">$2,400,000</text><text x="530" y="451.8" font-size="13.8" fill="#000" text-anchor="end" textLength="71.07" lengthAdjust="spacingAndGlyphs">$1,600,000</text><text x="651" y="451.8" font-size="13.8" fill="#000" text-anchor="end" textLength="71.07" lengthAdjust="spacingAndGlyphs">$2,400,000</text><text x="772" y="451.8" font-size="13.8" fill="#000" text-anchor="end" textLength="71.07" lengthAdjust="spacingAndGlyphs">$2,400,000</text><text x="893" y="451.8" font-size="13.8" fill="#000" text-anchor="end" textLength="71.07" lengthAdjust="spacingAndGlyphs">$2,400,000</text><text x="1014" y="451.8" font-size="13.8" fill="#000" text-anchor="end" textLength="71.07" lengthAdjust="spacingAndGlyphs">$2,400,000</text><text x="1135" y="451.8" font-size="13.8" fill="#000" text-anchor="end" textLength="71.07" lengthAdjust="spacingAndGlyphs">$2,400,000</text><text x="1256" y="451.8" font-size="13.8" fill="#000" text-anchor="end" textLength="71.07" lengthAdjust="spacingAndGlyphs">$2,400,000</text><text x="1377" y="451.8" font-size="13.8" fill="#000" text-anchor="end" textLength="71.07" lengthAdjust="spacingAndGlyphs">$2,400,000</text><text x="1498" y="451.8" font-size="13.8" fill="#000" text-anchor="end" textLength="71.07" lengthAdjust="spacingAndGlyphs">$2,400,000</text><text x="1619" y="451.8" font-size="13.8" fill="#000" text-anchor="end" textLength="71.07" lengthAdjust="spacingAndGlyphs">$2,400,000</text><text x="533.8" y="471.8" font-size="13.8" fill="#000" text-anchor="end" textLength="80.83" lengthAdjust="spacingAndGlyphs">($4,000,000)</text><text x="654.8" y="471.8" font-size="13.8" fill="#000" text-anchor="end" textLength="80.83" lengthAdjust="spacingAndGlyphs">($4,800,000)</text><text x="775.8" y="471.8" font-size="13.8" fill="#000" text-anchor="end" textLength="80.83" lengthAdjust="spacingAndGlyphs">($4,800,000)</text><text x="896.8" y="471.8" font-size="13.8" fill="#000" text-anchor="end" textLength="80.83" lengthAdjust="spacingAndGlyphs">($4,800,000)</text><text x="1017.8" y="471.8" font-size="13.8" fill="#000" text-anchor="end" textLength="80.83" lengthAdjust="spacingAndGlyphs">($4,800,000)</text><text x="1138.8" y="471.8" font-size="13.8" fill="#000" text-anchor="end" textLength="80.83" lengthAdjust="spacingAndGlyphs">($4,800,000)</text><text x="1259.8" y="471.8" font-size="13.8" fill="#000" text-anchor="end" textLength="80.83" lengthAdjust="spacingAndGlyphs">($4,800,000)</text><text x="1380.8" y="471.8" font-size="13.8" fill="#000" text-anchor="end" textLength="80.83" lengthAdjust="spacingAndGlyphs">($4,800,000)</text><text x="1501.8" y="471.8" font-size="13.8" fill="#000" text-anchor="end" textLength="80.83" lengthAdjust="spacingAndGlyphs">($4,800,000)</text><text x="1622.8" y="471.8" font-size="13.8" fill="#000" text-anchor="end" textLength="80.83" lengthAdjust="spacingAndGlyphs">($4,800,000)</text><text x="530" y="491.8" font-size="13.8" fill="#000" text-anchor="end" textLength="51.36" lengthAdjust="spacingAndGlyphs">$16,250</text><text x="651" y="491.8" font-size="13.8" fill="#000" text-anchor="end" textLength="51.36" lengthAdjust="spacingAndGlyphs">$19,500</text><text x="772" y="491.8" font-size="13.8" fill="#000" text-anchor="end" textLength="51.36" lengthAdjust="spacingAndGlyphs">$19,500</text><text x="893" y="491.8" font-size="13.8" fill="#000" text-anchor="end" textLength="51.36" lengthAdjust="spacingAndGlyphs">$19,500</text><text x="1014" y="491.8" font-size="13.8" fill="#000" text-anchor="end" textLength="51.36" lengthAdjust="spacingAndGlyphs">$19,500</text><text x="1135" y="491.8" font-size="13.8" fill="#000" text-anchor="end" textLength="51.36" lengthAdjust="spacingAndGlyphs">$19,500</text><text x="1256" y="491.8" font-size="13.8" fill="#000" text-anchor="end" textLength="51.36" lengthAdjust="spacingAndGlyphs">$19,500</text><text x="1377" y="491.8" font-size="13.8" fill="#000" text-anchor="end" textLength="51.36" lengthAdjust="spacingAndGlyphs">$19,500</text><text x="1498" y="491.8" font-size="13.8" fill="#000" text-anchor="end" textLength="51.36" lengthAdjust="spacingAndGlyphs">$19,500</text><text x="1619" y="491.8" font-size="13.8" fill="#000" text-anchor="end" textLength="51.36" lengthAdjust="spacingAndGlyphs">$19,500</text><text x="533.8" y="511.8" font-size="13.8" fill="#000" text-anchor="end" textLength="61.11" lengthAdjust="spacingAndGlyphs">($17,875)</text><text x="654.8" y="511.8" font-size="13.8" fill="#000" text-anchor="end" textLength="61.11" lengthAdjust="spacingAndGlyphs">($19,500)</text><text x="775.8" y="511.8" font-size="13.8" fill="#000" text-anchor="end" textLength="61.11" lengthAdjust="spacingAndGlyphs">($19,500)</text><text x="896.8" y="511.8" font-size="13.8" fill="#000" text-anchor="end" textLength="61.11" lengthAdjust="spacingAndGlyphs">($19,500)</text><text x="1017.8" y="511.8" font-size="13.8" fill="#000" text-anchor="end" textLength="61.11" lengthAdjust="spacingAndGlyphs">($19,500)</text><text x="1138.8" y="511.8" font-size="13.8" fill="#000" text-anchor="end" textLength="61.11" lengthAdjust="spacingAndGlyphs">($19,500)</text><text x="1259.8" y="511.8" font-size="13.8" fill="#000" text-anchor="end" textLength="61.11" lengthAdjust="spacingAndGlyphs">($19,500)</text><text x="1380.8" y="511.8" font-size="13.8" fill="#000" text-anchor="end" textLength="61.11" lengthAdjust="spacingAndGlyphs">($19,500)</text><text x="1501.8" y="511.8" font-size="13.8" fill="#000" text-anchor="end" textLength="61.11" lengthAdjust="spacingAndGlyphs">($19,500)</text><text x="1622.8" y="511.8" font-size="13.8" fill="#000" text-anchor="end" textLength="61.11" lengthAdjust="spacingAndGlyphs">($19,500)</text><text x="533.8" y="531.9" font-size="13.8" fill="#000" text-anchor="end" font-weight="bold" textLength="71.09" lengthAdjust="spacingAndGlyphs">($709,842)</text><text x="651" y="531.9" font-size="13.8" fill="#000" text-anchor="end" font-weight="bold" textLength="73.21" lengthAdjust="spacingAndGlyphs">$1,993,966</text><text x="772" y="531.9" font-size="13.8" fill="#000" text-anchor="end" font-weight="bold" textLength="61.04" lengthAdjust="spacingAndGlyphs">$721,365</text><text x="893" y="531.9" font-size="13.8" fill="#000" text-anchor="end" font-weight="bold" textLength="61.04" lengthAdjust="spacingAndGlyphs">$671,789</text><text x="1014" y="531.9" font-size="13.8" fill="#000" text-anchor="end" font-weight="bold" textLength="61.04" lengthAdjust="spacingAndGlyphs">$568,237</text><text x="1135" y="531.9" font-size="13.8" fill="#000" text-anchor="end" font-weight="bold" textLength="61.04" lengthAdjust="spacingAndGlyphs">$566,978</text><text x="1256" y="531.9" font-size="13.8" fill="#000" text-anchor="end" font-weight="bold" textLength="61.04" lengthAdjust="spacingAndGlyphs">$566,288</text><text x="1377" y="531.9" font-size="13.8" fill="#000" text-anchor="end" font-weight="bold" textLength="61.04" lengthAdjust="spacingAndGlyphs">$566,195</text><text x="1498" y="531.9" font-size="13.8" fill="#000" text-anchor="end" font-weight="bold" textLength="61.04" lengthAdjust="spacingAndGlyphs">$566,729</text><text x="1619" y="531.9" font-size="13.8" fill="#000" text-anchor="end" font-weight="bold" textLength="73.21" lengthAdjust="spacingAndGlyphs">$9,213,757</text><text x="533.8" y="554" font-size="13.8" fill="#000" text-anchor="end" textLength="69.02" lengthAdjust="spacingAndGlyphs">($709,842)</text><text x="651" y="554" font-size="13.8" fill="#000" text-anchor="end" textLength="71.07" lengthAdjust="spacingAndGlyphs">$1,284,124</text><text x="772" y="554" font-size="13.8" fill="#000" text-anchor="end" textLength="71.07" lengthAdjust="spacingAndGlyphs">$2,005,489</text><text x="893" y="554" font-size="13.8" fill="#000" text-anchor="end" textLength="71.07" lengthAdjust="spacingAndGlyphs">$2,677,277</text><text x="1014" y="554" font-size="13.8" fill="#000" text-anchor="end" textLength="71.07" lengthAdjust="spacingAndGlyphs">$3,245,514</text><text x="1135" y="554" font-size="13.8" fill="#000" text-anchor="end" textLength="71.07" lengthAdjust="spacingAndGlyphs">$3,812,492</text><text x="1256" y="554" font-size="13.8" fill="#000" text-anchor="end" textLength="71.07" lengthAdjust="spacingAndGlyphs">$4,378,779</text><text x="1377" y="554" font-size="13.8" fill="#000" text-anchor="end" textLength="71.07" lengthAdjust="spacingAndGlyphs">$4,944,974</text><text x="1498" y="554" font-size="13.8" fill="#000" text-anchor="end" textLength="71.07" lengthAdjust="spacingAndGlyphs">$5,511,704</text><text x="1619" y="554" font-size="13.8" fill="#000" text-anchor="end" textLength="78.98" lengthAdjust="spacingAndGlyphs">$14,725,461</text><text x="30.4" y="531.9" font-size="13.8" fill="#000" font-weight="bold" textLength="67.7" lengthAdjust="spacingAndGlyphs">Cash Flow</text><text x="408.5" y="531.9" font-size="13.8" fill="#000" text-anchor="end" font-weight="bold" textLength="5.07" lengthAdjust="spacingAndGlyphs">-</text><text x="30.4" y="554" font-size="13.8" fill="#000" textLength="143.95" lengthAdjust="spacingAndGlyphs">Cumulative Cash Flow</text><text x="408.5" y="554" font-size="13.8" fill="#000" text-anchor="end" textLength="4.93" lengthAdjust="spacingAndGlyphs">-</text><text x="1619" y="573.8" font-size="13.8" fill="#000" text-anchor="end" textLength="78.98" lengthAdjust="spacingAndGlyphs">$14,725,461</text><text x="1619" y="594.6" font-size="13.8" fill="#000" text-anchor="end" textLength="27.66" lengthAdjust="spacingAndGlyphs">0.00</text><text x="1629" y="531.9" font-size="13.8" fill="#000" textLength="675.3" lengthAdjust="spacingAndGlyphs">This is adding back raw material cogs section and then taking out when the actual purchases happened.</text><text x="1629" y="594.6" font-size="13.8" fill="#000" textLength="37.6" lengthAdjust="spacingAndGlyphs">check</text><text x="776.8" y="615" font-size="13.8" fill="#000" text-anchor="end" textLength="15.82" lengthAdjust="spacingAndGlyphs">16</text><text x="782.2" y="615" font-size="13.8" fill="#000" textLength="118.8" lengthAdjust="spacingAndGlyphs">Break-Even Month</text><text x="904.8" y="615" font-size="11.6" fill="#000" textLength="89" lengthAdjust="spacingAndGlyphs">(to cover equity)</text><text x="776.8" y="634.8" font-size="13.8" fill="#000" text-anchor="end" textLength="7.91" lengthAdjust="spacingAndGlyphs">2</text><text x="782.2" y="634.8" font-size="13.8" fill="#000" textLength="106.15" lengthAdjust="spacingAndGlyphs">Break-Even Year</text><text x="891.5" y="634.8" font-size="11.6" fill="#000" textLength="89" lengthAdjust="spacingAndGlyphs">(to cover equity)</text><rect x="28" y="600.3" width="207.8" height="99" fill="#f2f2f2" shape-rendering="crispEdges"/><rect x="28" y="598" width="388" height="2" fill="#000" shape-rendering="crispEdges"/><rect x="28" y="698" width="388" height="2" fill="#000" shape-rendering="crispEdges"/><rect x="236" y="598" width="2" height="102" fill="#000" shape-rendering="crispEdges"/><rect x="414" y="598" width="2" height="102" fill="#000" shape-rendering="crispEdges"/><text x="30.4" y="614.9" font-size="13.8" fill="#000" textLength="71.45" lengthAdjust="spacingAndGlyphs">Project IRR</text><text x="326.5" y="614.9" font-size="13.8" fill="#000" text-anchor="middle" textLength="39.17" lengthAdjust="spacingAndGlyphs">53.1%</text><text x="30.4" y="634.9" font-size="13.8" fill="#000" textLength="102.7" lengthAdjust="spacingAndGlyphs">Equity Required</text><text x="326.5" y="634.9" font-size="13.8" fill="#000" text-anchor="middle" textLength="71.07" lengthAdjust="spacingAndGlyphs">$2,920,421</text><text x="30.4" y="654.9" font-size="13.8" fill="#000" textLength="144.7" lengthAdjust="spacingAndGlyphs">Project Cash Returned</text><text x="326.5" y="654.9" font-size="13.8" fill="#000" text-anchor="middle" textLength="78.98" lengthAdjust="spacingAndGlyphs">$17,645,881</text><text x="30.4" y="674.9" font-size="13.8" fill="#000" textLength="98.95" lengthAdjust="spacingAndGlyphs">Equity Multiple</text><text x="326.5" y="674.9" font-size="13.8" fill="#000" text-anchor="middle" textLength="27.66" lengthAdjust="spacingAndGlyphs">6.04</text><text x="30.4" y="694.6" font-size="13.8" fill="#000" textLength="73.95" lengthAdjust="spacingAndGlyphs">Project ROI</text><text x="326.5" y="694.6" font-size="13.8" fill="#000" text-anchor="middle" textLength="35.24" lengthAdjust="spacingAndGlyphs">504%</text><rect x="28" y="721.5" width="207.8" height="100.25" fill="#f2f2f2" shape-rendering="crispEdges"/><rect x="28" y="719" width="388" height="2" fill="#000" shape-rendering="crispEdges"/><rect x="28" y="821" width="388" height="2" fill="#000" shape-rendering="crispEdges"/><rect x="236" y="719" width="2" height="104" fill="#000" shape-rendering="crispEdges"/><rect x="414" y="719" width="2" height="104" fill="#000" shape-rendering="crispEdges"/><text x="30.4" y="736.3" font-size="13.8" fill="#000" textLength="78.95" lengthAdjust="spacingAndGlyphs">Investor IRR</text><text x="326.5" y="736.3" font-size="13.8" fill="#000" text-anchor="middle" textLength="31.26" lengthAdjust="spacingAndGlyphs">3.0%</text><text x="30.4" y="756.3" font-size="13.8" fill="#000" textLength="158.45" lengthAdjust="spacingAndGlyphs">Investor Equity Required</text><text x="326.5" y="756.3" font-size="13.8" fill="#000" text-anchor="middle" textLength="71.07" lengthAdjust="spacingAndGlyphs">$2,895,421</text><text x="30.4" y="776.3" font-size="13.8" fill="#000" textLength="151.95" lengthAdjust="spacingAndGlyphs">Investor Cash Returned</text><text x="326.5" y="776.3" font-size="13.8" fill="#000" text-anchor="middle" textLength="71.07" lengthAdjust="spacingAndGlyphs">$3,529,176</text><text x="30.4" y="796.3" font-size="13.8" fill="#000" textLength="154.7" lengthAdjust="spacingAndGlyphs">Investor Equity Multiple</text><text x="326.5" y="796.3" font-size="13.8" fill="#000" text-anchor="middle" textLength="27.66" lengthAdjust="spacingAndGlyphs">1.22</text><text x="30.4" y="817.05" font-size="13.8" fill="#000" textLength="80.7" lengthAdjust="spacingAndGlyphs">Investor ROI</text><text x="326.5" y="817.05" font-size="13.8" fill="#000" text-anchor="middle" textLength="27.33" lengthAdjust="spacingAndGlyphs">22%</text><rect x="28" y="844" width="207.8" height="99.75" fill="#f2f2f2" shape-rendering="crispEdges"/><rect x="28" y="842" width="388" height="2" fill="#000" shape-rendering="crispEdges"/><rect x="28" y="943" width="388" height="2" fill="#000" shape-rendering="crispEdges"/><rect x="236" y="842" width="2" height="103" fill="#000" shape-rendering="crispEdges"/><rect x="414" y="842" width="2" height="103" fill="#000" shape-rendering="crispEdges"/><text x="30.4" y="858.3" font-size="13.8" fill="#000" textLength="69.7" lengthAdjust="spacingAndGlyphs">Owner IRR</text><text x="326.5" y="858.3" font-size="13.8" fill="#000" text-anchor="middle" textLength="54.99" lengthAdjust="spacingAndGlyphs">7063.4%</text><text x="30.4" y="878.3" font-size="13.8" fill="#000" textLength="149.7" lengthAdjust="spacingAndGlyphs">Owner Equity Required</text><text x="326.5" y="878.3" font-size="13.8" fill="#000" text-anchor="middle" textLength="51.36" lengthAdjust="spacingAndGlyphs">$25,000</text><text x="30.4" y="898.3" font-size="13.8" fill="#000" textLength="142.7" lengthAdjust="spacingAndGlyphs">Owner Cash Returned</text><text x="326.5" y="898.3" font-size="13.8" fill="#000" text-anchor="middle" textLength="78.98" lengthAdjust="spacingAndGlyphs">$14,116,705</text><text x="30.4" y="918.3" font-size="13.8" fill="#000" textLength="145.95" lengthAdjust="spacingAndGlyphs">Owner Equity Multiple</text><text x="326.5" y="918.3" font-size="13.8" fill="#000" text-anchor="middle" textLength="43.48" lengthAdjust="spacingAndGlyphs">564.67</text><text x="30.4" y="939.05" font-size="13.8" fill="#000" textLength="72.2" lengthAdjust="spacingAndGlyphs">Owner ROI</text><text x="326.5" y="939.05" font-size="13.8" fill="#000" text-anchor="middle" textLength="51.06" lengthAdjust="spacingAndGlyphs">56367%</text><rect x="28" y="292" width="1" height="1021" fill="#b4b4b4" shape-rendering="crispEdges"/><rect x="416" y="272" width="1" height="1041" fill="#a6a6a6" shape-rendering="crispEdges"/><rect x="0" y="346" width="2534" height="1" fill="#a6a6a6" shape-rendering="crispEdges"/><rect x="27" y="537.5" width="2" height="21.2" fill="#107c41" shape-rendering="crispEdges"/><rect x="899" y="536" width="124" height="2" fill="#107c41" shape-rendering="crispEdges"/><rect x="899" y="558.5" width="120" height="2" fill="#107c41" shape-rendering="crispEdges"/><rect x="899" y="536" width="2" height="24.5" fill="#107c41" shape-rendering="crispEdges"/><rect x="1021" y="536" width="2" height="19.5" fill="#107c41" shape-rendering="crispEdges"/><rect x="1019" y="556" width="5" height="5" fill="#107c41" shape-rendering="crispEdges"/><rect x="2534" y="272" width="1" height="1041" fill="#dcdcdc" shape-rendering="crispEdges"/><rect x="2535" y="272" width="25" height="1041" fill="#f0f0f0" shape-rendering="crispEdges"/><rect x="2537" y="272" width="21" height="1045" fill="#f4f4f4" rx="8"/><path d="M2547.5 278.5 l5 8 h-10 z" fill="#707070" stroke="#707070" stroke-width="1" stroke-linejoin="round" /><rect x="2542" y="772" width="11" height="515" fill="#707070" rx="5.5"/><path d="M2542.5 1300.5 h10 l-5 8 z" fill="#707070" stroke="#707070" stroke-width="1" stroke-linejoin="round" /><rect x="0" y="1313" width="2560" height="40" fill="#f0f0f0" shape-rendering="crispEdges"/><rect x="0" y="1313" width="2534" height="1" fill="#dedede" shape-rendering="crispEdges"/><path d="M38.5 1326 l-6 6 l6 6" fill="none" stroke="#444" stroke-width="1.3" /><path d="M73 1326 l6 6 l-6 6" fill="none" stroke="#444" stroke-width="1.3" /><circle cx="110" cy="1332" r="1.9" fill="#444"/><circle cx="115.5" cy="1332" r="1.9" fill="#444"/><circle cx="121" cy="1332" r="1.9" fill="#444"/><rect x="141.25" y="1318" width="111.25" height="29.75" fill="#e2efda" rx="6"/><text x="153" y="1340" font-size="17.2" fill="#1a1a1a" textLength="88.5" lengthAdjust="spacingAndGlyphs">SalesMatrix</text><rect x="257.8" y="1321" width="1" height="24" fill="#d0d0d0" shape-rendering="crispEdges"/><rect x="264.25" y="1318" width="138.25" height="29.75" fill="#ffffcc" rx="6"/><text x="275.75" y="1340" font-size="17.2" fill="#1a1a1a" textLength="115.5" lengthAdjust="spacingAndGlyphs">Fixed Expenses</text><rect x="407.8" y="1321" width="1" height="24" fill="#d0d0d0" shape-rendering="crispEdges"/><rect x="414.25" y="1318" width="105.25" height="29.75" fill="#ffffcc" rx="6"/><text x="424.5" y="1340" font-size="17.2" fill="#1a1a1a" textLength="84.25" lengthAdjust="spacingAndGlyphs">Equipment</text><rect x="524.8" y="1321" width="1" height="24" fill="#d0d0d0" shape-rendering="crispEdges"/><rect x="531.25" y="1318" width="125" height="29.75" fill="#ffffcc" rx="6"/><text x="542" y="1340" font-size="17.2" fill="#1a1a1a" textLength="104" lengthAdjust="spacingAndGlyphs">Startup Costs</text><rect x="661.55" y="1321" width="1" height="24" fill="#d0d0d0" shape-rendering="crispEdges"/><rect x="668" y="1318" width="98.75" height="29.75" fill="#ffffcc" rx="6"/><text x="678.75" y="1340" font-size="17.2" fill="#1a1a1a" textLength="77.25" lengthAdjust="spacingAndGlyphs">Cap Table</text><rect x="772.05" y="1321" width="1" height="24" fill="#d0d0d0" shape-rendering="crispEdges"/><rect x="778.25" y="1318" width="85.5" height="29.75" fill="#ffffcc" rx="6"/><text x="790.25" y="1340" font-size="17.2" fill="#1a1a1a" textLength="62.75" lengthAdjust="spacingAndGlyphs">Building</text><rect x="869.05" y="1321" width="1" height="24" fill="#d0d0d0" shape-rendering="crispEdges"/><rect x="875" y="1318" width="72.5" height="29.75" fill="#ffffcc" rx="6"/><text x="884.5" y="1340" font-size="17.2" fill="#1a1a1a" textLength="52.75" lengthAdjust="spacingAndGlyphs">Cap Ex</text><rect x="952.8" y="1321" width="1" height="24" fill="#d0d0d0" shape-rendering="crispEdges"/><rect x="959.25" y="1318" width="134.5" height="29.75" fill="#ffffcc" rx="6"/><text x="970" y="1340" font-size="17.2" fill="#1a1a1a" textLength="112.5" lengthAdjust="spacingAndGlyphs">Debt Schedule</text><rect x="1099.05" y="1321" width="1" height="24" fill="#d0d0d0" shape-rendering="crispEdges"/><rect x="1105" y="1318" width="126.75" height="29.75" fill="#ffffcc" rx="6"/><text x="1117" y="1340" font-size="17.2" fill="#1a1a1a" textLength="103.5" lengthAdjust="spacingAndGlyphs">Line of Credit</text><rect x="1237.05" y="1321" width="1" height="24" fill="#d0d0d0" shape-rendering="crispEdges"/><rect x="1243" y="1318" width="138.75" height="29.75" fill="#ffffcc" rx="6"/><text x="1254.5" y="1340" font-size="17.2" fill="#1a1a1a" textLength="115.25" lengthAdjust="spacingAndGlyphs">Terminal Value</text><rect x="1387.05" y="1321" width="1" height="24" fill="#d0d0d0" shape-rendering="crispEdges"/><rect x="1393" y="1318" width="62.75" height="29.75" fill="#808080" rx="6"/><text x="1403.75" y="1340" font-size="17.2" fill="#ffffff" textLength="41.75" lengthAdjust="spacingAndGlyphs">IS- M</text><rect x="1461.05" y="1321" width="1" height="24" fill="#d0d0d0" shape-rendering="crispEdges"/><rect x="1467" y="1318" width="57.5" height="29.75" fill="#808080" rx="6"/><text x="1477.5" y="1340" font-size="17.2" fill="#ffffff" textLength="38" lengthAdjust="spacingAndGlyphs">IS- A</text><rect x="1529.8" y="1321" width="1" height="24" fill="#d0d0d0" shape-rendering="crispEdges"/><rect x="1536.25" y="1318" width="67.5" height="29.75" fill="#808080" rx="6"/><text x="1546.5" y="1340" font-size="17.2" fill="#ffffff" textLength="47.75" lengthAdjust="spacingAndGlyphs">BS- M</text><rect x="1609.05" y="1321" width="1" height="24" fill="#d0d0d0" shape-rendering="crispEdges"/><rect x="1615" y="1318" width="63.75" height="29.75" fill="#808080" rx="6"/><text x="1625.75" y="1340" font-size="17.2" fill="#ffffff" textLength="43.5" lengthAdjust="spacingAndGlyphs">BS- A</text><rect x="1684.05" y="1321" width="1" height="24" fill="#d0d0d0" shape-rendering="crispEdges"/><rect x="1690" y="1318" width="67.5" height="29.75" fill="#808080" rx="6"/><text x="1700.75" y="1340" font-size="17.2" fill="#ffffff" textLength="47.25" lengthAdjust="spacingAndGlyphs">CF- M</text><rect x="1762.8" y="1321" width="1" height="24" fill="#d0d0d0" shape-rendering="crispEdges"/><rect x="1768.75" y="1318" width="63" height="29.75" fill="#808080" rx="6"/><text x="1779.5" y="1340" font-size="17.2" fill="#ffffff" textLength="42.25" lengthAdjust="spacingAndGlyphs">CF- A</text><rect x="1837.05" y="1321" width="1" height="24" fill="#d0d0d0" shape-rendering="crispEdges"/><rect x="1843" y="1318" width="120.75" height="29.75" fill="#7030a0" rx="6"/><text x="1854" y="1340" font-size="17.2" fill="#ffffff" textLength="98.5" lengthAdjust="spacingAndGlyphs">DCF Analysis</text><rect x="1969.05" y="1321" width="1" height="24" fill="#d0d0d0" shape-rendering="crispEdges"/><defs><linearGradient id="actg" x1="0" y1="0" x2="0" y2="1"><stop offset="0" stop-color="#ffffff"/><stop offset=".45" stop-color="#ede3f4"/><stop offset="1" stop-color="#c7abdb"/></linearGradient></defs><path d="M1970.5 1313.5 Q1975.5 1313.5 1975.5 1318.5 V1341.5 Q1975.5 1347.5 1981.5 1347.5 H2142.75 Q2148.75 1347.5 2148.75 1341.5 V1318.5 Q2148.75 1313.5 2153.75 1313.5" fill="url(#actg)" stroke="#dcdcdc" stroke-width="1" /><rect x="1975.5" y="1312.5" width="173.25" height="1.5" fill="#ffffff" shape-rendering="crispEdges"/><text x="1985" y="1336.25" font-size="17.2" fill="#1a1a1a" textLength="155" lengthAdjust="spacingAndGlyphs">Executive Summary</text><rect x="1985.5" y="1343" width="154" height="2" fill="#107c41" shape-rendering="crispEdges"/><rect x="2155" y="1321" width="1" height="24" fill="#d0d0d0" shape-rendering="crispEdges"/><clipPath id="visclip"><rect x="2161" y="1310" width="64.5" height="40"/></clipPath><g clip-path="url(#visclip)"><rect x="2161.25" y="1318" width="80" height="29.75" fill="#7030a0" rx="6"/><text x="2171.6" y="1340" font-size="17.2" fill="#fff" textLength="53.4" lengthAdjust="spacingAndGlyphs">Visuals</text></g><circle cx="2240" cy="1332" r="1.9" fill="#444"/><circle cx="2245" cy="1332" r="1.9" fill="#444"/><circle cx="2250" cy="1332" r="1.9" fill="#444"/><path d="M2285.25 1325 v14.5 M2278 1332.25 h14.5" fill="none" stroke="#333" stroke-width="1.4" /><circle cx="2326" cy="1328.5" r="1.5" fill="#444"/><circle cx="2326" cy="1333.5" r="1.5" fill="#444"/><circle cx="2326" cy="1338.5" r="1.5" fill="#444"/><rect x="2346" y="1322" width="188" height="21" fill="#f6f6f6" rx="10.5"/><path d="M2360 1327.5 v10.5 l-7.5 -5.25 z" fill="#707070" /><rect x="2367" y="1327" width="143" height="11" fill="#707070" rx="5.5"/><path d="M2520.5 1327.5 v10.5 l7.5 -5.25 z" fill="#707070" /><rect x="0" y="1353" width="2560" height="27" fill="#f3f3f3" shape-rendering="crispEdges"/><rect x="0" y="1353" width="2560" height="1" fill="#fbfbfb" shape-rendering="crispEdges"/><text x="14.25" y="1372.5" font-size="13.4" fill="#333" textLength="36.25" lengthAdjust="spacingAndGlyphs">Ready</text><path d="M93.2 1365 V1359.6 H76.6 V1374 H81.8 M76.6 1362.4 H93.2 M79.3 1365 H82.6 M79.3 1367.5 H81 M79.3 1370.1 H81" fill="none" stroke="#333" stroke-width="1.25" /><circle cx="88" cy="1370.1" r="5.1" fill="#f3f3f3" stroke="#222" stroke-width="1.3"/><circle cx="88" cy="1370.1" r="2.3" fill="#222"/><path d="M121 1364.8 C119.5 1364 117 1364.2 116.5 1362.6 C116 1361 118 1360.5 119.5 1361.5 C121 1362.5 122.5 1363.3 123.8 1363.3 C125.2 1363.3 127 1362.3 128.5 1361.5 C130 1360.6 131.5 1361.5 130.8 1363 C130.3 1364 128.5 1364.8 126.8 1365.5 M121 1364.8 C121.2 1367.5 120.8 1370 119.5 1372.5 C119 1374 119.8 1375.5 121 1375.3 C122.3 1375 122.5 1372.5 123.5 1370.5 C124.3 1369.3 124.8 1370.5 124.8 1371.8" fill="none" stroke="#222" stroke-width="1.1" stroke-linecap="round" /><circle cx="123.7" cy="1360.9" r="1.9" fill="none" stroke="#222" stroke-width="1.1"/><path d="M125.2 1367.3 L133.4 1375.6 M133.4 1367.3 L125.2 1375.6" fill="none" stroke="#333" stroke-width="1" /><text x="138.25" y="1372.5" font-size="13.4" fill="#262626" font-weight="bold" textLength="152.25" lengthAdjust="spacingAndGlyphs">Accessibility: Investigate</text><rect x="2187" y="1354" width="50" height="26" fill="#e1e1e1" shape-rendering="crispEdges"/><path d="M2203.5 1359.5 h16 v15 h-16 z M2203.5 1364.5 h16 M2203.5 1369.5 h16 M2208.8 1359.5 v15 M2214.1 1359.5 v15" fill="none" stroke="#444" stroke-width="1.3" /><path d="M2253.5 1359.5 h17 v15 h-17 z M2257 1363 h10 v8 h-10 z M2259 1365.5 h6 M2259 1368.5 h6" fill="none" stroke="#444" stroke-width="1.2" /><path d="M2303.5 1359.5 h17 v15 h-17 z M2303.5 1368.5 h9 v-9 M2308 1359.5 v5" fill="none" stroke="#444" stroke-width="1.2" /><rect x="2343.75" y="1366.5" width="9.5" height="1.2" fill="#444" shape-rendering="crispEdges"/><rect x="2360.5" y="1366.8" width="124" height="1" fill="#8a8a8a" shape-rendering="crispEdges"/><rect x="2410" y="1360" width="5.5" height="13.75" fill="#555" rx="1"/><rect x="2421.5" y="1363" width="1" height="8" fill="#777" shape-rendering="crispEdges"/><path d="M2491 1366.8 h9 M2495.5 1362.5 v9" fill="none" stroke="#444" stroke-width="1.1" /><text x="2517" y="1372" font-size="13" fill="#333" textLength="24" lengthAdjust="spacingAndGlyphs">85%</text><rect x="0" y="1380" width="2560" height="60" fill="#cfe3f2" shape-rendering="crispEdges"/><rect x="0" y="1380" width="2560" height="1" fill="#b7c6d2" shape-rendering="crispEdges"/><defs><linearGradient id="thg" x1="0" y1="0" x2="0" y2="1"><stop offset="0" stop-color="#ff4a6e"/><stop offset="1" stop-color="#3b7fd9"/></linearGradient></defs><path d="M31.3 1412.6 V1399.6 a5 5 0 0 1 10 0 V1412.6 a7.2 7.2 0 1 1 -10 0 z" fill="#9fd0fb" stroke="#5a6f80" stroke-width="0.6" /><rect x="34.2" y="1398.5" width="3.4" height="4" fill="#6fa0c8" rx="1.5"/><rect x="34.2" y="1401.5" width="3.4" height="12" fill="url(#thg)" rx="1.2"/><circle cx="36.2" cy="1416.2" r="3.8" fill="#1f8ae0"/><rect x="45.7" y="1408.8" width="3.1" height="11.2" fill="#ff1a1a" shape-rendering="crispEdges"/><rect x="44.2" y="1407.6" width="6.2" height="2.1" fill="#ff1a1a" shape-rendering="crispEdges"/><circle cx="48.75" cy="1397.5" r="10" fill="#c42b1c"/><text x="48.75" y="1402.5" font-size="13.5" fill="#fff" text-anchor="middle">2</text><text x="64.5" y="1404.6" font-size="15.3" fill="#1a1a1a" textLength="91.5" lengthAdjust="spacingAndGlyphs">Temps to rise</text><text x="64.5" y="1425" font-size="15" fill="#555" textLength="79" lengthAdjust="spacingAndGlyphs">Wednesday</text><defs><linearGradient id="winl" x1="0" y1="0" x2="1" y2="1"><stop offset="0" stop-color="#4cc2ff"/><stop offset="1" stop-color="#0067c0"/></linearGradient></defs><rect x="932" y="1396.25" width="13.9" height="13.9" fill="url(#winl)" rx="1.2"/><rect x="946.7" y="1396.25" width="13.9" height="13.9" fill="url(#winl)" rx="1.2"/><rect x="932" y="1410.6" width="13.9" height="13.9" fill="url(#winl)" rx="1.2"/><rect x="946.7" y="1410.6" width="13.9" height="13.9" fill="url(#winl)" rx="1.2"/><rect x="978.75" y="1391.25" width="273.25" height="38.25" fill="#f1f6fa" rx="19" stroke="#c9d6e0" stroke-width="1"/><circle cx="1000.5" cy="1409" r="6.8" fill="none" stroke="#222" stroke-width="2"/><path d="M1005.5 1414 l5 5" fill="none" stroke="#222" stroke-width="2.2" /><text x="1023.75" y="1417" font-size="16" fill="#555" textLength="51.75" lengthAdjust="spacingAndGlyphs">Search</text><path d="M1189 1426 l8 -6 h50 l-6 6 z" fill="#e6c48e" /><rect x="1197" y="1395" width="17" height="26" fill="#eef4ff" stroke="#b7c8e6" stroke-width="0.8" shape-rendering="crispEdges"/><circle cx="1206" cy="1404" r="3.5" fill="#2b7bd8"/><circle cx="1202" cy="1414" r="2.5" fill="#e0662c"/><rect x="1216" y="1402" width="16" height="19" fill="#d98a2b" shape-rendering="crispEdges"/><rect x="1216" y="1398" width="16" height="5" fill="#2c6fc4" shape-rendering="crispEdges"/><rect x="1276" y="1399" width="22" height="20" fill="#f2f2f2" rx="2"/><rect x="1268" y="1407" width="18" height="17" fill="#222" rx="2"/><rect x="1276" y="1407" width="10" height="10" fill="#bbb" shape-rendering="crispEdges"/><path d="M1322.5 1400 h11 l3 3 h16.5 v20.75 h-30.5 z" fill="#f8c443" /><rect x="1322.5" y="1405" width="30.5" height="18.75" fill="#ffd866" rx="1"/><rect x="1331" y="1415" width="13" height="6" fill="#1f73d1" rx="1"/><rect x="1333.75" y="1430" width="8.25" height="3.75" fill="#777" rx="1.8"/><circle cx="1392.5" cy="1409.4" r="13.5" fill="#ff1b2d"/><ellipse cx="1392.5" cy="1409.4" rx="5.5" ry="10" fill="#cfe3f2"/><rect x="1388.75" y="1430" width="8.25" height="3.75" fill="#777" rx="1.8"/><circle cx="1448" cy="1411" r="14.5" fill="#db4437"/><path d="M1448 1411 L1435.4 1418.3 A14.5 14.5 0 0 0 1455.3 1423.6 z" fill="#0f9d58" /><path d="M1448 1411 L1455.3 1423.6 A14.5 14.5 0 0 0 1462.5 1411 L1448 1411 z" fill="#ffcd40" /><path d="M1448 1411 L1462.5 1411 A14.5 14.5 0 0 0 1441 1398.3 z" fill="#db4437" /><circle cx="1448" cy="1411" r="6.5" fill="#fff"/><circle cx="1448" cy="1411" r="5" fill="#4285f4"/><circle cx="1458.75" cy="1398.75" r="10" fill="#b9b9b9" stroke="#9a9a9a" stroke-width="1"/><rect x="1452" y="1398.3" width="13.5" height="1.2" fill="#888" shape-rendering="crispEdges"/><rect x="1443.75" y="1430" width="8.25" height="3.75" fill="#777" rx="1.8"/><rect x="1488" y="1395" width="24" height="24" fill="#e6eef5" rx="3"/><path d="M1491 1398 h14 v14 h-14 z" fill="none" stroke="#d9342b" stroke-width="2" stroke-dasharray="3 2"/><path d="M1503 1410 l6 8 M1509 1410 l-6 8" fill="none" stroke="#777" stroke-width="1.6" /><circle cx="1503" cy="1421" r="2.5" fill="none" stroke="#2b88d8" stroke-width="1.5"/><circle cx="1515" cy="1415" r="2.5" fill="none" stroke="#2b88d8" stroke-width="1.5"/><rect x="1546.5" y="1397" width="23" height="26" fill="#5fc1ef" rx="2"/><rect x="1546.5" y="1421" width="23" height="3.5" fill="#8a4a2b" shape-rendering="crispEdges"/><rect x="1550.5" y="1405" width="15" height="1.8" fill="#0a5d8c" shape-rendering="crispEdges"/><rect x="1550.5" y="1409.5" width="15" height="1.8" fill="#0a5d8c" shape-rendering="crispEdges"/><rect x="1550.5" y="1414" width="15" height="1.8" fill="#0a5d8c" shape-rendering="crispEdges"/><circle cx="1550" cy="1396" r="1.5" fill="#0a5d8c"/><circle cx="1555" cy="1396" r="1.5" fill="#0a5d8c"/><circle cx="1560" cy="1396" r="1.5" fill="#0a5d8c"/><circle cx="1565" cy="1396" r="1.5" fill="#0a5d8c"/><rect x="1553.75" y="1430" width="8.25" height="3.75" fill="#777" rx="1.8"/><rect x="1603" y="1396.25" width="24.5" height="27.5" fill="#21a366" rx="2"/><rect x="1615" y="1396.25" width="12.5" height="7" fill="#33c481"/><rect x="1603" y="1410" width="24.5" height="7" fill="#107c41"/><rect x="1603" y="1416.5" width="24.5" height="7.25" fill="#185c37" rx="1"/><rect x="1597.5" y="1401.5" width="15.5" height="15.5" fill="#107c41" rx="1.5"/><path d="M1601.5 1405 l7.5 8.5 M1609 1405 l-7.5 8.5" fill="none" stroke="#fff" stroke-width="2" /><rect x="1608.75" y="1430" width="8.25" height="3.75" fill="#777" rx="1.8"/><path d="M2368 1414 l6.5 -6.5 l6.5 6.5" fill="none" stroke="#222" stroke-width="1.5" /><path d="M2404.5 1401.5 h15 v12 h-15 z M2408 1418.5 h9 M2412.5 1413.5 v5" fill="none" stroke="#222" stroke-width="1.2" /><rect x="2419" y="1400" width="4.5" height="8" fill="#cfe3f2" stroke="#222" stroke-width="1" shape-rendering="crispEdges"/><path d="M2423 1408 v11" fill="none" stroke="#222" stroke-width="1.1" /><path d="M2434.5 1405.5 h3.5 l5 -4.5 v15 l-5 -4.5 h-3.5 z M2446 1405 a5 5 0 0 1 0 7.5 M2449 1402.5 a8.5 8.5 0 0 1 0 12.5" fill="none" stroke="#222" stroke-width="1.2" /><text x="2482" y="1405" font-size="14.5" fill="#1a1a1a" textLength="54" lengthAdjust="spacingAndGlyphs">3:22 PM</text><text x="2474.5" y="1424.5" font-size="14.5" fill="#1a1a1a" textLength="61.5" lengthAdjust="spacingAndGlyphs">6/9/2025</text></svg>
</body></html>
